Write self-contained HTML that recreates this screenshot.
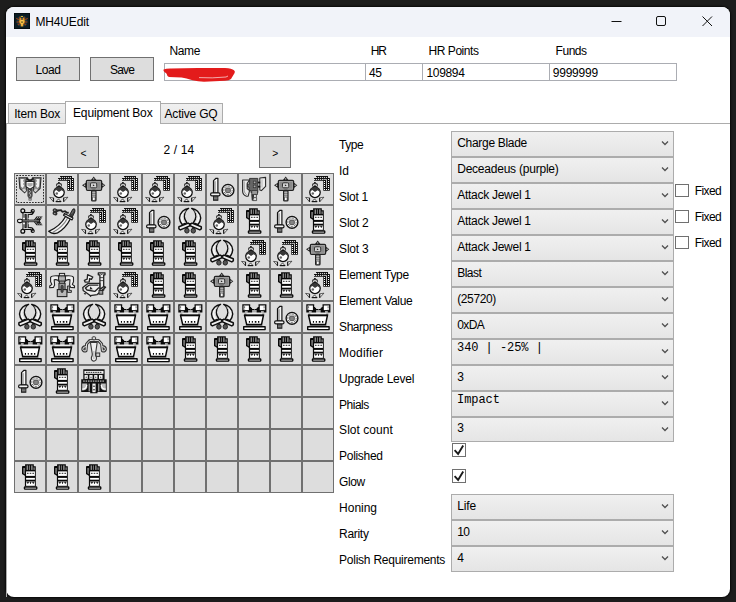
<!DOCTYPE html>
<html lang="en"><head><meta charset="utf-8"><title>MH4UEdit</title>
<style>
html,body{margin:0;padding:0;}
body{width:736px;height:602px;background:#1d1d1d;position:relative;overflow:hidden;font-family:"Liberation Sans",sans-serif;font-size:12px;}
.abs,.t,.btn,.inp,.cb,.chk,.cell{position:absolute;box-sizing:border-box;}
.t{white-space:pre;}
#win{position:absolute;left:6px;top:7px;width:724px;height:590px;background:#fff;border-radius:8px;overflow:hidden;box-shadow:0 0 2px 1px rgba(0,0,0,0.75);}
#tb{position:absolute;left:0;top:0;width:724px;height:30px;background:#f1f3f9;}
.btn{background:#ddd;border:1px solid #707070;}
.inp{background:#fff;border:1px solid #abadb3;}
.cb{border:1px solid #acacac;background:linear-gradient(#f0f0f0,#e5e5e5);}
.chk{border:1px solid #707070;background:#fff;}
.cell{background:#ddd;border:1px solid #707070;width:32px;height:32px;}
.cell svg{position:absolute;left:-1px;top:-1px;width:32px;height:32px;}
</style></head><body>
<div id="win"><div id="tb"></div></div>

<svg class="abs" style="left:14px;top:13px" width="16" height="16" viewBox="0 0 16 16">
<rect width="16" height="16" fill="#04090d"/>
<rect x="0.7" y="0.7" width="14.6" height="14.6" fill="#0b1c23"/>
<g style="filter:blur(0.45px)">
<circle cx="8" cy="8.2" r="5.6" fill="#16353d"/>
<path d="M2.2 5.2 L5.4 7 M2.6 9.2 L5.4 8.8 M3.8 12 L6 10.4 M13.8 5.2 L10.6 7 M13.4 9.2 L10.6 8.8 M12.2 12 L10 10.4 M5.2 3.8 L6.4 5.6 M10.8 3.8 L9.6 5.6" stroke="#8e3a16" stroke-width="1.2"/>
<path d="M5.6 5.2 L6.6 4.4 L8 5.4 L9.4 4.4 L10.4 5.2 L11 9 L9.4 11.2 L9.2 13.4 H6.8 L6.6 11.2 L5 9 Z" fill="#dc951f"/>
<path d="M6.4 7 L8 6.2 L9.6 7 L9.8 9.4 L8.6 11 L8.6 12.8 H7.4 L7.4 11 L6.2 9.4 Z" fill="#f7c654"/>
<rect x="6.8" y="3" width="2.2" height="0.9" fill="#f6c63a"/>
<rect x="7.3" y="5.2" width="1.4" height="1.7" fill="#2c3550"/>
<circle cx="8" cy="9.1" r="0.9" fill="#5c5a1c"/>
</g>
</svg>
<span class="t" style="left:35.40px;top:14.60px;font-size:12px;line-height:14px;color:#000;letter-spacing:-0.136px;">MH4UEdit</span>
<svg class="abs" style="left:600px;top:8px" width="124" height="28" viewBox="600 8 124 28" fill="none" stroke="#111" stroke-width="1">
<path d="M611.5 21.5 H621.5"/>
<rect x="656.5" y="16.5" width="9" height="9" rx="1.5"/>
<path d="M702.5 16.5 L712 26 M712 16.5 L702.5 26"/>
</svg>
<div class="btn" style="left:16px;top:57px;width:64px;height:24px"></div>
<div class="btn" style="left:90px;top:57px;width:64px;height:24px"></div>
<span class="t" style="left:35.50px;top:62.50px;font-size:12px;line-height:14px;color:#000;letter-spacing:-0.426px;">Load</span>
<span class="t" style="left:110.00px;top:62.50px;font-size:12px;line-height:14px;color:#000;letter-spacing:-0.840px;">Save</span>
<span class="t" style="left:169.50px;top:43.50px;font-size:12px;line-height:14px;color:#000;letter-spacing:-0.379px;">Name</span>
<span class="t" style="left:370.70px;top:43.50px;font-size:12px;line-height:14px;color:#000;letter-spacing:-1.172px;">HR</span>
<span class="t" style="left:428.50px;top:43.50px;font-size:12px;line-height:14px;color:#000;letter-spacing:-0.448px;">HR Points</span>
<span class="t" style="left:555.60px;top:43.50px;font-size:12px;line-height:14px;color:#000;letter-spacing:-0.472px;">Funds</span>
<div class="inp" style="left:164px;top:63px;width:202px;height:18px"></div>
<div class="inp" style="left:365px;top:63px;width:58px;height:18px"></div>
<div class="inp" style="left:422px;top:63px;width:128px;height:18px"></div>
<div class="inp" style="left:549px;top:63px;width:128px;height:18px"></div>
<span class="t" style="left:369.00px;top:65.50px;font-size:12px;line-height:14px;color:#000;letter-spacing:-0.430px;">45</span>
<span class="t" style="left:426.50px;top:65.50px;font-size:12px;line-height:14px;color:#000;letter-spacing:-0.341px;">109894</span>
<span class="t" style="left:552.70px;top:65.50px;font-size:12px;line-height:14px;color:#000;letter-spacing:-0.203px;">9999999</span>
<svg class="abs" style="left:160px;top:62px" width="80" height="24" viewBox="160 62 80 24">
<path d="M163.6 69.6 Q166 68.4 171 68.5 L198 68.1 L225 68 Q232 68.6 234 70.2 Q235.4 71.4 234.6 73 L231 79 Q229 80.6 225 80.8 L204 81.8 Q198 81.6 192.6 80.2 Q186 78 181.6 77.4 L169 76.9 Q167 76.4 166.6 73.8 L164 71.6 Q163.2 70.4 163.6 69.6 Z" fill="#e31b1b"/>
<path d="M199 77.6 Q212 78.4 226 77 L228 76" fill="none" stroke="#fbeaea" stroke-width="0.7"/>
</svg>
<div class="abs" style="left:6px;top:123px;width:724px;height:1px;background:#acacac"></div>
<div class="abs" style="left:6px;top:123px;width:1px;height:474px;background:#acacac"></div>
<div class="abs" style="left:8px;top:103px;width:58px;height:21px;border:1px solid #acacac;background:linear-gradient(#f0f0f0,#e5e5e5)"></div>
<div class="abs" style="left:160px;top:103px;width:63px;height:21px;border:1px solid #acacac;background:linear-gradient(#f0f0f0,#e5e5e5)"></div>
<div class="abs" style="left:65px;top:101px;width:96px;height:23px;border:1px solid #acacac;border-bottom:none;background:#fff"></div>
<span class="t" style="left:14.20px;top:107.00px;font-size:12px;line-height:14px;color:#000;letter-spacing:-0.170px;">Item Box</span>
<span class="t" style="left:73.00px;top:106.00px;font-size:12px;line-height:14px;color:#000;letter-spacing:-0.145px;">Equipment Box</span>
<span class="t" style="left:164.50px;top:107.00px;font-size:12px;line-height:14px;color:#000;letter-spacing:-0.188px;">Active GQ</span>
<div class="btn" style="left:67px;top:136px;width:32px;height:32px"></div>
<div class="btn" style="left:259px;top:136px;width:32px;height:32px"></div>
<span class="t" style="left:80.50px;top:146.50px;font-size:10.3px;line-height:13px;color:#000;">&lt;</span>
<span class="t" style="left:272.20px;top:146.50px;font-size:10.3px;line-height:13px;color:#000;">&gt;</span>
<span class="t" style="left:163.50px;top:142.70px;font-size:12px;line-height:14px;color:#000;letter-spacing:0.128px;">2 / 14</span>
<div class="cell" style="left:14px;top:173px"><svg viewBox="0 0 32 32"><path d="M5 4.8 H13.3 L12 7 L12.8 17.4 L10.6 19.8 L5.9 15.4 Z" fill="#8a8a8a" stroke="#2c2c2c" stroke-width="1.1"/><path d="M27 4.8 H18.7 L20 7 L19.2 17.4 L21.4 19.8 L26.1 15.4 Z" fill="#8a8a8a" stroke="#2c2c2c" stroke-width="1.1"/><path d="M6.6 6 H10 L9 8 L10.2 9.4 L9 11 L10.2 12.6 L8.8 15 L6.9 13.6 Z" fill="#f0f0f0"/><path d="M25.4 6 H22 L23 8 L21.8 9.4 L23 11 L21.8 12.6 L23.2 15 L25.1 13.6 Z" fill="#f0f0f0"/><path d="M10.4 15.6 L12.4 17.6 L10.6 19.2 L8 16.8 Z" fill="#d0d0d0"/><path d="M21.6 15.6 L19.6 17.6 L21.4 19.2 L24 16.8 Z" fill="#d0d0d0"/><path d="M12.6 4.4 L16 6.6 L19.4 4.4 L18.8 7.6 L16 8.4 L13.2 7.6 Z" fill="#1a1a1a"/><path d="M13.4 15.5 H18.6 V23 L17.6 25 V27.4 H14.6 V25 L13.4 23 Z" fill="#4a4a4a"/><path d="M15 17 L16.6 18.6 L15.2 20.4 L17 22 L15.6 24" fill="none" stroke="#bbb" stroke-width="0.9"/><rect x="14.8" y="25.6" width="2.6" height="1.4" fill="#999"/><path d="M12 8.4 H20 V13.6 L16 16.2 L12 13.6 Z" fill="#f4f4f4" stroke="#222" stroke-width="1.1" stroke-linejoin="round"/><path d="M13.4 9.9 H18.6 V12.4 L16 13.8 L13.4 12.4 Z" fill="#aaa"/></svg><svg viewBox="0 0 32 32"><rect x="2.5" y="2.5" width="27" height="27" fill="none" stroke="#111" stroke-width="0.9" stroke-dasharray="1.6 1.3"/></svg></div>
<div class="cell" style="left:46px;top:173px"><svg viewBox="0 0 32 32"><path d="M14 2.9 H26 V4.9 H27.9 V17.7 H21.3 V7.8 H12 V4.9 H14 Z" fill="#0c0c0c"/><rect x="13.85" y="3.95" width="1.1" height="0.9" fill="#fff"/><rect x="15.85" y="3.95" width="1.1" height="0.9" fill="#fff"/><rect x="17.85" y="3.95" width="1.1" height="0.9" fill="#fff"/><rect x="19.85" y="3.95" width="1.1" height="0.9" fill="#fff"/><rect x="21.85" y="3.95" width="1.1" height="0.9" fill="#fff"/><rect x="23.85" y="3.95" width="1.1" height="0.9" fill="#fff"/><rect x="11.95" y="5.95" width="1.1" height="0.9" fill="#fff"/><rect x="13.85" y="5.95" width="1.1" height="0.9" fill="#fff"/><rect x="15.85" y="5.95" width="1.1" height="0.9" fill="#fff"/><rect x="17.85" y="5.95" width="1.1" height="0.9" fill="#fff"/><rect x="19.85" y="5.95" width="1.1" height="0.9" fill="#fff"/><path d="M21.4 6.4 H24.5 V14.9" fill="none" stroke="#e8e8e8" stroke-width="0.8"/><rect x="22.00" y="8.00" width="1.0" height="1.0" fill="#fff"/><rect x="22.00" y="10.00" width="1.0" height="1.0" fill="#fff"/><rect x="22.00" y="12.00" width="1.0" height="1.0" fill="#fff"/><rect x="22.00" y="14.00" width="1.0" height="1.0" fill="#fff"/><rect x="22.00" y="16.00" width="1.0" height="1.0" fill="#fff"/><rect x="26.00" y="6.00" width="1.0" height="1.0" fill="#fff"/><rect x="26.00" y="8.00" width="1.0" height="1.0" fill="#fff"/><rect x="26.00" y="10.00" width="1.0" height="1.0" fill="#fff"/><rect x="26.00" y="12.00" width="1.0" height="1.0" fill="#fff"/><rect x="26.00" y="14.00" width="1.0" height="1.0" fill="#fff"/><rect x="26.00" y="16.00" width="1.0" height="1.0" fill="#fff"/><rect x="24.00" y="16.00" width="1.0" height="1.0" fill="#fff"/><rect x="12" y="9.1" width="1.8" height="1.2" fill="#111"/><rect x="10.3" y="10.3" width="5.4" height="3.6" rx="1.2" fill="#111"/><path d="M11.2 13.3 V11.8 Q11.2 11.2 11.8 11.2 H14.2 Q14.8 11.2 14.8 11.8 V13.3 H13.8 V12.3 H12.2 V13.3 Z" fill="#fff"/><circle cx="13" cy="19.3" r="5.25" fill="#fff" stroke="#0c0c0c" stroke-width="1.25"/><path d="M7.8 18.8 L10.3 16.9 L13 19.1 L15.6 17.2 L18.2 18.9 A5.25 5.25 0 0 0 7.8 18.8 Z" fill="#383838"/><circle cx="10.8" cy="20.4" r="1.25" fill="#666"/><path d="M3.6 24.4 L7.6 24.9 V28.8 Z" fill="#f0f0f0" stroke="#111" stroke-width="0.65" stroke-linejoin="round"/><path d="M7.35 24.9 V28.7" stroke="#111" stroke-width="1"/><path d="M9.9 28.7 L12.5 25.9 L15.1 28.7 Z" fill="#f0f0f0" stroke="#111" stroke-width="0.7" stroke-linejoin="round"/><path d="M9.9 28.55 H15.1" stroke="#111" stroke-width="1"/><path d="M17.5 24.9 L21.9 24.2 L17.7 28.8 Z" fill="#f0f0f0" stroke="#111" stroke-width="0.65" stroke-linejoin="round"/><path d="M17.75 24.8 V28.6" stroke="#111" stroke-width="1"/></svg></div>
<div class="cell" style="left:78px;top:173px"><svg viewBox="0 0 32 32"><path d="M12.8 7.2 L15.7 3.5 L18.6 7.2 Z" fill="#222"/><path d="M8.3 9.4 L4 12.3 L8.3 15.3 Z" fill="#222"/><path d="M23.7 9.4 L27.3 12.3 L23.7 15.3 Z" fill="#222"/><circle cx="15.7" cy="6" r="0.7" fill="#ccc"/><circle cx="6.6" cy="12.3" r="0.8" fill="#ccc"/><circle cx="25" cy="12.3" r="0.8" fill="#ccc"/><rect x="8.4" y="7.3" width="15.2" height="10" rx="1.2" fill="#8a8a8a" stroke="#222" stroke-width="1.3"/><rect x="9.6" y="8.5" width="12.8" height="7.6" fill="none" stroke="#a8a8a8" stroke-width="0.7"/><rect x="12.5" y="9.8" width="6.2" height="5" rx="1.2" fill="#d4d4d4" stroke="#333" stroke-width="1"/><path d="M14.9 11.4 L16.7 12.3 L14.9 13.2 Z" fill="#111"/><rect x="13.6" y="17.4" width="4.4" height="10.6" rx="1" fill="#777" stroke="#222" stroke-width="1.2"/><path d="M14.3 19.6 H17.3 M14.3 21.4 H17.3 M14.3 23.2 H17.3" stroke="#c8c8c8" stroke-width="0.8"/><rect x="15" y="24.6" width="1.6" height="2.4" rx="0.6" fill="#fff"/></svg></div>
<div class="cell" style="left:110px;top:173px"><svg viewBox="0 0 32 32"><path d="M14 2.9 H26 V4.9 H27.9 V17.7 H21.3 V7.8 H12 V4.9 H14 Z" fill="#0c0c0c"/><rect x="13.85" y="3.95" width="1.1" height="0.9" fill="#fff"/><rect x="15.85" y="3.95" width="1.1" height="0.9" fill="#fff"/><rect x="17.85" y="3.95" width="1.1" height="0.9" fill="#fff"/><rect x="19.85" y="3.95" width="1.1" height="0.9" fill="#fff"/><rect x="21.85" y="3.95" width="1.1" height="0.9" fill="#fff"/><rect x="23.85" y="3.95" width="1.1" height="0.9" fill="#fff"/><rect x="11.95" y="5.95" width="1.1" height="0.9" fill="#fff"/><rect x="13.85" y="5.95" width="1.1" height="0.9" fill="#fff"/><rect x="15.85" y="5.95" width="1.1" height="0.9" fill="#fff"/><rect x="17.85" y="5.95" width="1.1" height="0.9" fill="#fff"/><rect x="19.85" y="5.95" width="1.1" height="0.9" fill="#fff"/><path d="M21.4 6.4 H24.5 V14.9" fill="none" stroke="#e8e8e8" stroke-width="0.8"/><rect x="22.00" y="8.00" width="1.0" height="1.0" fill="#fff"/><rect x="22.00" y="10.00" width="1.0" height="1.0" fill="#fff"/><rect x="22.00" y="12.00" width="1.0" height="1.0" fill="#fff"/><rect x="22.00" y="14.00" width="1.0" height="1.0" fill="#fff"/><rect x="22.00" y="16.00" width="1.0" height="1.0" fill="#fff"/><rect x="26.00" y="6.00" width="1.0" height="1.0" fill="#fff"/><rect x="26.00" y="8.00" width="1.0" height="1.0" fill="#fff"/><rect x="26.00" y="10.00" width="1.0" height="1.0" fill="#fff"/><rect x="26.00" y="12.00" width="1.0" height="1.0" fill="#fff"/><rect x="26.00" y="14.00" width="1.0" height="1.0" fill="#fff"/><rect x="26.00" y="16.00" width="1.0" height="1.0" fill="#fff"/><rect x="24.00" y="16.00" width="1.0" height="1.0" fill="#fff"/><rect x="12" y="9.1" width="1.8" height="1.2" fill="#111"/><rect x="10.3" y="10.3" width="5.4" height="3.6" rx="1.2" fill="#111"/><path d="M11.2 13.3 V11.8 Q11.2 11.2 11.8 11.2 H14.2 Q14.8 11.2 14.8 11.8 V13.3 H13.8 V12.3 H12.2 V13.3 Z" fill="#fff"/><circle cx="13" cy="19.3" r="5.25" fill="#fff" stroke="#0c0c0c" stroke-width="1.25"/><path d="M7.8 18.8 L10.3 16.9 L13 19.1 L15.6 17.2 L18.2 18.9 A5.25 5.25 0 0 0 7.8 18.8 Z" fill="#383838"/><circle cx="10.8" cy="20.4" r="1.25" fill="#666"/><path d="M3.6 24.4 L7.6 24.9 V28.8 Z" fill="#f0f0f0" stroke="#111" stroke-width="0.65" stroke-linejoin="round"/><path d="M7.35 24.9 V28.7" stroke="#111" stroke-width="1"/><path d="M9.9 28.7 L12.5 25.9 L15.1 28.7 Z" fill="#f0f0f0" stroke="#111" stroke-width="0.7" stroke-linejoin="round"/><path d="M9.9 28.55 H15.1" stroke="#111" stroke-width="1"/><path d="M17.5 24.9 L21.9 24.2 L17.7 28.8 Z" fill="#f0f0f0" stroke="#111" stroke-width="0.65" stroke-linejoin="round"/><path d="M17.75 24.8 V28.6" stroke="#111" stroke-width="1"/></svg></div>
<div class="cell" style="left:142px;top:173px"><svg viewBox="0 0 32 32"><path d="M14 2.9 H26 V4.9 H27.9 V17.7 H21.3 V7.8 H12 V4.9 H14 Z" fill="#0c0c0c"/><rect x="13.85" y="3.95" width="1.1" height="0.9" fill="#fff"/><rect x="15.85" y="3.95" width="1.1" height="0.9" fill="#fff"/><rect x="17.85" y="3.95" width="1.1" height="0.9" fill="#fff"/><rect x="19.85" y="3.95" width="1.1" height="0.9" fill="#fff"/><rect x="21.85" y="3.95" width="1.1" height="0.9" fill="#fff"/><rect x="23.85" y="3.95" width="1.1" height="0.9" fill="#fff"/><rect x="11.95" y="5.95" width="1.1" height="0.9" fill="#fff"/><rect x="13.85" y="5.95" width="1.1" height="0.9" fill="#fff"/><rect x="15.85" y="5.95" width="1.1" height="0.9" fill="#fff"/><rect x="17.85" y="5.95" width="1.1" height="0.9" fill="#fff"/><rect x="19.85" y="5.95" width="1.1" height="0.9" fill="#fff"/><path d="M21.4 6.4 H24.5 V14.9" fill="none" stroke="#e8e8e8" stroke-width="0.8"/><rect x="22.00" y="8.00" width="1.0" height="1.0" fill="#fff"/><rect x="22.00" y="10.00" width="1.0" height="1.0" fill="#fff"/><rect x="22.00" y="12.00" width="1.0" height="1.0" fill="#fff"/><rect x="22.00" y="14.00" width="1.0" height="1.0" fill="#fff"/><rect x="22.00" y="16.00" width="1.0" height="1.0" fill="#fff"/><rect x="26.00" y="6.00" width="1.0" height="1.0" fill="#fff"/><rect x="26.00" y="8.00" width="1.0" height="1.0" fill="#fff"/><rect x="26.00" y="10.00" width="1.0" height="1.0" fill="#fff"/><rect x="26.00" y="12.00" width="1.0" height="1.0" fill="#fff"/><rect x="26.00" y="14.00" width="1.0" height="1.0" fill="#fff"/><rect x="26.00" y="16.00" width="1.0" height="1.0" fill="#fff"/><rect x="24.00" y="16.00" width="1.0" height="1.0" fill="#fff"/><rect x="12" y="9.1" width="1.8" height="1.2" fill="#111"/><rect x="10.3" y="10.3" width="5.4" height="3.6" rx="1.2" fill="#111"/><path d="M11.2 13.3 V11.8 Q11.2 11.2 11.8 11.2 H14.2 Q14.8 11.2 14.8 11.8 V13.3 H13.8 V12.3 H12.2 V13.3 Z" fill="#fff"/><circle cx="13" cy="19.3" r="5.25" fill="#fff" stroke="#0c0c0c" stroke-width="1.25"/><path d="M7.8 18.8 L10.3 16.9 L13 19.1 L15.6 17.2 L18.2 18.9 A5.25 5.25 0 0 0 7.8 18.8 Z" fill="#383838"/><circle cx="10.8" cy="20.4" r="1.25" fill="#666"/><path d="M3.6 24.4 L7.6 24.9 V28.8 Z" fill="#f0f0f0" stroke="#111" stroke-width="0.65" stroke-linejoin="round"/><path d="M7.35 24.9 V28.7" stroke="#111" stroke-width="1"/><path d="M9.9 28.7 L12.5 25.9 L15.1 28.7 Z" fill="#f0f0f0" stroke="#111" stroke-width="0.7" stroke-linejoin="round"/><path d="M9.9 28.55 H15.1" stroke="#111" stroke-width="1"/><path d="M17.5 24.9 L21.9 24.2 L17.7 28.8 Z" fill="#f0f0f0" stroke="#111" stroke-width="0.65" stroke-linejoin="round"/><path d="M17.75 24.8 V28.6" stroke="#111" stroke-width="1"/></svg></div>
<div class="cell" style="left:174px;top:173px"><svg viewBox="0 0 32 32"><path d="M14 2.9 H26 V4.9 H27.9 V17.7 H21.3 V7.8 H12 V4.9 H14 Z" fill="#0c0c0c"/><rect x="13.85" y="3.95" width="1.1" height="0.9" fill="#fff"/><rect x="15.85" y="3.95" width="1.1" height="0.9" fill="#fff"/><rect x="17.85" y="3.95" width="1.1" height="0.9" fill="#fff"/><rect x="19.85" y="3.95" width="1.1" height="0.9" fill="#fff"/><rect x="21.85" y="3.95" width="1.1" height="0.9" fill="#fff"/><rect x="23.85" y="3.95" width="1.1" height="0.9" fill="#fff"/><rect x="11.95" y="5.95" width="1.1" height="0.9" fill="#fff"/><rect x="13.85" y="5.95" width="1.1" height="0.9" fill="#fff"/><rect x="15.85" y="5.95" width="1.1" height="0.9" fill="#fff"/><rect x="17.85" y="5.95" width="1.1" height="0.9" fill="#fff"/><rect x="19.85" y="5.95" width="1.1" height="0.9" fill="#fff"/><path d="M21.4 6.4 H24.5 V14.9" fill="none" stroke="#e8e8e8" stroke-width="0.8"/><rect x="22.00" y="8.00" width="1.0" height="1.0" fill="#fff"/><rect x="22.00" y="10.00" width="1.0" height="1.0" fill="#fff"/><rect x="22.00" y="12.00" width="1.0" height="1.0" fill="#fff"/><rect x="22.00" y="14.00" width="1.0" height="1.0" fill="#fff"/><rect x="22.00" y="16.00" width="1.0" height="1.0" fill="#fff"/><rect x="26.00" y="6.00" width="1.0" height="1.0" fill="#fff"/><rect x="26.00" y="8.00" width="1.0" height="1.0" fill="#fff"/><rect x="26.00" y="10.00" width="1.0" height="1.0" fill="#fff"/><rect x="26.00" y="12.00" width="1.0" height="1.0" fill="#fff"/><rect x="26.00" y="14.00" width="1.0" height="1.0" fill="#fff"/><rect x="26.00" y="16.00" width="1.0" height="1.0" fill="#fff"/><rect x="24.00" y="16.00" width="1.0" height="1.0" fill="#fff"/><rect x="12" y="9.1" width="1.8" height="1.2" fill="#111"/><rect x="10.3" y="10.3" width="5.4" height="3.6" rx="1.2" fill="#111"/><path d="M11.2 13.3 V11.8 Q11.2 11.2 11.8 11.2 H14.2 Q14.8 11.2 14.8 11.8 V13.3 H13.8 V12.3 H12.2 V13.3 Z" fill="#fff"/><circle cx="13" cy="19.3" r="5.25" fill="#fff" stroke="#0c0c0c" stroke-width="1.25"/><path d="M7.8 18.8 L10.3 16.9 L13 19.1 L15.6 17.2 L18.2 18.9 A5.25 5.25 0 0 0 7.8 18.8 Z" fill="#383838"/><circle cx="10.8" cy="20.4" r="1.25" fill="#666"/><path d="M3.6 24.4 L7.6 24.9 V28.8 Z" fill="#f0f0f0" stroke="#111" stroke-width="0.65" stroke-linejoin="round"/><path d="M7.35 24.9 V28.7" stroke="#111" stroke-width="1"/><path d="M9.9 28.7 L12.5 25.9 L15.1 28.7 Z" fill="#f0f0f0" stroke="#111" stroke-width="0.7" stroke-linejoin="round"/><path d="M9.9 28.55 H15.1" stroke="#111" stroke-width="1"/><path d="M17.5 24.9 L21.9 24.2 L17.7 28.8 Z" fill="#f0f0f0" stroke="#111" stroke-width="0.65" stroke-linejoin="round"/><path d="M17.75 24.8 V28.6" stroke="#111" stroke-width="1"/></svg></div>
<div class="cell" style="left:206px;top:173px"><svg viewBox="0 0 32 32"><path d="M7.5 7.6 L10 5.3 H11.9 V20 H7.5 Z" fill="#f6f6f6" stroke="#141414" stroke-width="1.2" stroke-linejoin="round"/><path d="M9 8.2 V19.6" stroke="#3a3a3a" stroke-width="0.7"/><rect x="7.5" y="22.6" width="4.4" height="4.7" fill="#505050" stroke="#1c1c1c" stroke-width="0.9"/><path d="M8 24 H11.4 M8 25.6 H11.4" stroke="#9a9a9a" stroke-width="0.6"/><rect x="4.6" y="19.9" width="9.4" height="2.9" rx="1.4" fill="#f0f0f0" stroke="#141414" stroke-width="1.2"/><circle cx="22" cy="17.3" r="5.9" fill="#f4f4f4" stroke="#141414" stroke-width="1.4"/><circle cx="22" cy="17.3" r="4.2" fill="none" stroke="#3a3a3a" stroke-width="0.7" stroke-dasharray="2.3 1.0" stroke-dashoffset="1.1"/><rect x="19.7" y="15.1" width="4.6" height="4.5" rx="0.9" fill="#858585" stroke="#4a4a4a" stroke-width="0.9"/></svg></div>
<div class="cell" style="left:238px;top:173px"><svg viewBox="0 0 32 32"><path d="M4.6 7 H11.6 L9.2 10.4 V15.8 L11.6 17.4 L10.2 23.2 H8.4 Q4.6 21.8 4.6 18 Z" fill="#e9e9e9" stroke="#2a2a2a" stroke-width="1.1" stroke-linejoin="round"/><path d="M6.2 8.4 V18 Q6.6 20.6 8.8 21.8" fill="none" stroke="#888" stroke-width="0.8"/><path d="M21.8 5 L27.6 4.4 V13.4 L23.4 17.6 L21.8 17 Z" fill="#ececec" stroke="#2a2a2a" stroke-width="1.1" stroke-linejoin="round"/><path d="M24 6.4 V14.6" stroke="#aaa" stroke-width="0.8"/><rect x="19.6" y="8.6" width="2.6" height="1.8" fill="#111"/><rect x="19.6" y="12.8" width="2.6" height="1.8" fill="#111"/><path d="M11.6 5.4 H19.8 V19.6 H13 V17.6 H11 V14 H9.4 V11.2 H11.6 Z" fill="#666" stroke="#2a2a2a" stroke-width="0.9" stroke-linejoin="round"/><rect x="15.3" y="8.1" width="2.6" height="2.6" fill="#aaa" stroke="#333" stroke-width="0.7"/><rect x="15.3" y="12.1" width="2.6" height="2.6" fill="#aaa" stroke="#333" stroke-width="0.7"/><rect x="13.8" y="17.6" width="5.6" height="3.8" fill="#999" stroke="#333" stroke-width="0.8"/><path d="M13.2 21.4 H16 V25 L15.2 27.4 H13.8 Z" fill="#333"/><path d="M15.6 24.6 H18.6 V27.6 H14.8 Z" fill="#ddd" stroke="#333" stroke-width="0.8"/><path d="M16.4 21.4 H18.4 V24.4" stroke="#444" stroke-width="0.9" fill="none"/></svg></div>
<div class="cell" style="left:270px;top:173px"><svg viewBox="0 0 32 32"><path d="M12.8 7.2 L15.7 3.5 L18.6 7.2 Z" fill="#222"/><path d="M8.3 9.4 L4 12.3 L8.3 15.3 Z" fill="#222"/><path d="M23.7 9.4 L27.3 12.3 L23.7 15.3 Z" fill="#222"/><circle cx="15.7" cy="6" r="0.7" fill="#ccc"/><circle cx="6.6" cy="12.3" r="0.8" fill="#ccc"/><circle cx="25" cy="12.3" r="0.8" fill="#ccc"/><rect x="8.4" y="7.3" width="15.2" height="10" rx="1.2" fill="#8a8a8a" stroke="#222" stroke-width="1.3"/><rect x="9.6" y="8.5" width="12.8" height="7.6" fill="none" stroke="#a8a8a8" stroke-width="0.7"/><rect x="12.5" y="9.8" width="6.2" height="5" rx="1.2" fill="#d4d4d4" stroke="#333" stroke-width="1"/><path d="M14.9 11.4 L16.7 12.3 L14.9 13.2 Z" fill="#111"/><rect x="13.6" y="17.4" width="4.4" height="10.6" rx="1" fill="#777" stroke="#222" stroke-width="1.2"/><path d="M14.3 19.6 H17.3 M14.3 21.4 H17.3 M14.3 23.2 H17.3" stroke="#c8c8c8" stroke-width="0.8"/><rect x="15" y="24.6" width="1.6" height="2.4" rx="0.6" fill="#fff"/></svg></div>
<div class="cell" style="left:302px;top:173px"><svg viewBox="0 0 32 32"><path d="M14 2.9 H26 V4.9 H27.9 V17.7 H21.3 V7.8 H12 V4.9 H14 Z" fill="#0c0c0c"/><rect x="13.85" y="3.95" width="1.1" height="0.9" fill="#fff"/><rect x="15.85" y="3.95" width="1.1" height="0.9" fill="#fff"/><rect x="17.85" y="3.95" width="1.1" height="0.9" fill="#fff"/><rect x="19.85" y="3.95" width="1.1" height="0.9" fill="#fff"/><rect x="21.85" y="3.95" width="1.1" height="0.9" fill="#fff"/><rect x="23.85" y="3.95" width="1.1" height="0.9" fill="#fff"/><rect x="11.95" y="5.95" width="1.1" height="0.9" fill="#fff"/><rect x="13.85" y="5.95" width="1.1" height="0.9" fill="#fff"/><rect x="15.85" y="5.95" width="1.1" height="0.9" fill="#fff"/><rect x="17.85" y="5.95" width="1.1" height="0.9" fill="#fff"/><rect x="19.85" y="5.95" width="1.1" height="0.9" fill="#fff"/><path d="M21.4 6.4 H24.5 V14.9" fill="none" stroke="#e8e8e8" stroke-width="0.8"/><rect x="22.00" y="8.00" width="1.0" height="1.0" fill="#fff"/><rect x="22.00" y="10.00" width="1.0" height="1.0" fill="#fff"/><rect x="22.00" y="12.00" width="1.0" height="1.0" fill="#fff"/><rect x="22.00" y="14.00" width="1.0" height="1.0" fill="#fff"/><rect x="22.00" y="16.00" width="1.0" height="1.0" fill="#fff"/><rect x="26.00" y="6.00" width="1.0" height="1.0" fill="#fff"/><rect x="26.00" y="8.00" width="1.0" height="1.0" fill="#fff"/><rect x="26.00" y="10.00" width="1.0" height="1.0" fill="#fff"/><rect x="26.00" y="12.00" width="1.0" height="1.0" fill="#fff"/><rect x="26.00" y="14.00" width="1.0" height="1.0" fill="#fff"/><rect x="26.00" y="16.00" width="1.0" height="1.0" fill="#fff"/><rect x="24.00" y="16.00" width="1.0" height="1.0" fill="#fff"/><rect x="12" y="9.1" width="1.8" height="1.2" fill="#111"/><rect x="10.3" y="10.3" width="5.4" height="3.6" rx="1.2" fill="#111"/><path d="M11.2 13.3 V11.8 Q11.2 11.2 11.8 11.2 H14.2 Q14.8 11.2 14.8 11.8 V13.3 H13.8 V12.3 H12.2 V13.3 Z" fill="#fff"/><circle cx="13" cy="19.3" r="5.25" fill="#fff" stroke="#0c0c0c" stroke-width="1.25"/><path d="M7.8 18.8 L10.3 16.9 L13 19.1 L15.6 17.2 L18.2 18.9 A5.25 5.25 0 0 0 7.8 18.8 Z" fill="#383838"/><circle cx="10.8" cy="20.4" r="1.25" fill="#666"/><path d="M3.6 24.4 L7.6 24.9 V28.8 Z" fill="#f0f0f0" stroke="#111" stroke-width="0.65" stroke-linejoin="round"/><path d="M7.35 24.9 V28.7" stroke="#111" stroke-width="1"/><path d="M9.9 28.7 L12.5 25.9 L15.1 28.7 Z" fill="#f0f0f0" stroke="#111" stroke-width="0.7" stroke-linejoin="round"/><path d="M9.9 28.55 H15.1" stroke="#111" stroke-width="1"/><path d="M17.5 24.9 L21.9 24.2 L17.7 28.8 Z" fill="#f0f0f0" stroke="#111" stroke-width="0.65" stroke-linejoin="round"/><path d="M17.75 24.8 V28.6" stroke="#111" stroke-width="1"/></svg></div>
<div class="cell" style="left:14px;top:205px"><svg viewBox="0 0 32 32"><g fill="none" stroke-linecap="round" stroke-linejoin="round"><path d="M9.2 6.4 L10 8.4 V23.6 L9.2 25.6 M10 8.6 H16.4 Q18.2 8.6 18.6 6.6 M10 23.4 H16.4 Q18.2 23.4 18.6 25.4 M13.2 8.6 V23.4" stroke="#0c0c0c" stroke-width="3"/><path d="M9.2 6.4 L10 8.4 V23.6 L9.2 25.6 M10 8.6 H16.4 Q18.2 8.6 18.6 6.6 M10 23.4 H16.4 Q18.2 23.4 18.6 25.4 M13.2 8.6 V23.4" stroke="#d8d8d8" stroke-width="1"/></g><circle cx="8.8" cy="5.7" r="1.9" fill="#e8e8e8" stroke="#0c0c0c" stroke-width="1.3"/><circle cx="8.8" cy="26.3" r="1.9" fill="#e8e8e8" stroke="#0c0c0c" stroke-width="1.3"/><circle cx="18.7" cy="6" r="2.1" fill="#0c0c0c"/><circle cx="18.7" cy="26" r="2.1" fill="#0c0c0c"/><circle cx="19" cy="5.8" r="0.8" fill="#ccc"/><circle cx="19" cy="26.2" r="0.8" fill="#ccc"/><rect x="9" y="12.8" width="2" height="1.6" fill="#eee"/><rect x="9" y="17.6" width="2" height="1.6" fill="#eee"/><rect x="14.4" y="12.8" width="2" height="1.6" fill="#eee"/><rect x="14.4" y="17.6" width="2" height="1.6" fill="#eee"/><path d="M19.2 15.9 L22.4 11.5 H28.6 L25.8 15.9 L28.6 20.3 H22.4 Z" fill="#1c1c1c"/><path d="M22.8 13.4 L23.8 12.2 M24.8 13.4 L25.8 12.2 M26.6 13.4 L27.4 12.4 M22.8 18.4 L23.8 19.6 M24.8 18.4 L25.8 19.6 M26.6 18.4 L27.4 19.4 M21.6 14.8 L22.4 13.8 M21.6 17 L22.4 18" stroke="#e0e0e0" stroke-width="0.9"/><rect x="7.6" y="15" width="17.8" height="1.8" fill="#999" stroke="#0c0c0c" stroke-width="0.7"/><rect x="3.5" y="14.2" width="4.8" height="3.4" rx="1.6" fill="#eaeaea" stroke="#0c0c0c" stroke-width="1.1"/></svg></div>
<div class="cell" style="left:46px;top:205px"><svg viewBox="0 0 32 32"><path d="M7 4 Q8.8 2.6 10.6 4 L12.2 4.8 L12.6 6.6 L11 7.2 Q12.2 9 10.6 10.2 Q8.6 10.8 7 9.6 Q5.8 8 7.2 6.8 Q6 5.2 7 4 Z" fill="#2e2e2e"/><circle cx="8.8" cy="5.2" r="0.7" fill="#b0b0b0"/><circle cx="8.8" cy="8.5" r="0.7" fill="#b0b0b0"/><path d="M12 5.4 L15 5.2 L16.4 6.8 L19 6.2 L21 7.8 L22.8 7.6" fill="none" stroke="#222" stroke-width="1.8"/><path d="M23.4 10.2 L26.8 4.2 Q28.2 3 29 4.6 L28.8 7 L26.2 12.2 Z" fill="#404040" stroke="#1c1c1c" stroke-width="0.9"/><path d="M25.6 8.8 L27.6 5.2" stroke="#8a8a8a" stroke-width="0.7"/><path d="M19.7 11.2 Q14.4 21.2 2.7 26.3 Q6.4 29.8 11.6 27.8 Q19.4 23.8 24.4 13.8 Z" fill="#f4f4f4" stroke="#141414" stroke-width="1.3" stroke-linejoin="round"/><path d="M21.8 12.8 Q16.6 22.6 6.6 27.4" fill="none" stroke="#808080" stroke-width="1.1"/><path d="M18.4 8.4 L27 13 L26 14.9 L17.5 10.3 Z" fill="#f0f0f0" stroke="#141414" stroke-width="1.1" stroke-linejoin="round"/></svg></div>
<div class="cell" style="left:78px;top:205px"><svg viewBox="0 0 32 32"><path d="M14 2.9 H26 V4.9 H27.9 V17.7 H21.3 V7.8 H12 V4.9 H14 Z" fill="#0c0c0c"/><rect x="13.85" y="3.95" width="1.1" height="0.9" fill="#fff"/><rect x="15.85" y="3.95" width="1.1" height="0.9" fill="#fff"/><rect x="17.85" y="3.95" width="1.1" height="0.9" fill="#fff"/><rect x="19.85" y="3.95" width="1.1" height="0.9" fill="#fff"/><rect x="21.85" y="3.95" width="1.1" height="0.9" fill="#fff"/><rect x="23.85" y="3.95" width="1.1" height="0.9" fill="#fff"/><rect x="11.95" y="5.95" width="1.1" height="0.9" fill="#fff"/><rect x="13.85" y="5.95" width="1.1" height="0.9" fill="#fff"/><rect x="15.85" y="5.95" width="1.1" height="0.9" fill="#fff"/><rect x="17.85" y="5.95" width="1.1" height="0.9" fill="#fff"/><rect x="19.85" y="5.95" width="1.1" height="0.9" fill="#fff"/><path d="M21.4 6.4 H24.5 V14.9" fill="none" stroke="#e8e8e8" stroke-width="0.8"/><rect x="22.00" y="8.00" width="1.0" height="1.0" fill="#fff"/><rect x="22.00" y="10.00" width="1.0" height="1.0" fill="#fff"/><rect x="22.00" y="12.00" width="1.0" height="1.0" fill="#fff"/><rect x="22.00" y="14.00" width="1.0" height="1.0" fill="#fff"/><rect x="22.00" y="16.00" width="1.0" height="1.0" fill="#fff"/><rect x="26.00" y="6.00" width="1.0" height="1.0" fill="#fff"/><rect x="26.00" y="8.00" width="1.0" height="1.0" fill="#fff"/><rect x="26.00" y="10.00" width="1.0" height="1.0" fill="#fff"/><rect x="26.00" y="12.00" width="1.0" height="1.0" fill="#fff"/><rect x="26.00" y="14.00" width="1.0" height="1.0" fill="#fff"/><rect x="26.00" y="16.00" width="1.0" height="1.0" fill="#fff"/><rect x="24.00" y="16.00" width="1.0" height="1.0" fill="#fff"/><rect x="12" y="9.1" width="1.8" height="1.2" fill="#111"/><rect x="10.3" y="10.3" width="5.4" height="3.6" rx="1.2" fill="#111"/><path d="M11.2 13.3 V11.8 Q11.2 11.2 11.8 11.2 H14.2 Q14.8 11.2 14.8 11.8 V13.3 H13.8 V12.3 H12.2 V13.3 Z" fill="#fff"/><circle cx="13" cy="19.3" r="5.25" fill="#fff" stroke="#0c0c0c" stroke-width="1.25"/><path d="M7.8 18.8 L10.3 16.9 L13 19.1 L15.6 17.2 L18.2 18.9 A5.25 5.25 0 0 0 7.8 18.8 Z" fill="#383838"/><circle cx="10.8" cy="20.4" r="1.25" fill="#666"/><path d="M3.6 24.4 L7.6 24.9 V28.8 Z" fill="#f0f0f0" stroke="#111" stroke-width="0.65" stroke-linejoin="round"/><path d="M7.35 24.9 V28.7" stroke="#111" stroke-width="1"/><path d="M9.9 28.7 L12.5 25.9 L15.1 28.7 Z" fill="#f0f0f0" stroke="#111" stroke-width="0.7" stroke-linejoin="round"/><path d="M9.9 28.55 H15.1" stroke="#111" stroke-width="1"/><path d="M17.5 24.9 L21.9 24.2 L17.7 28.8 Z" fill="#f0f0f0" stroke="#111" stroke-width="0.65" stroke-linejoin="round"/><path d="M17.75 24.8 V28.6" stroke="#111" stroke-width="1"/></svg></div>
<div class="cell" style="left:110px;top:205px"><svg viewBox="0 0 32 32"><path d="M14 2.9 H26 V4.9 H27.9 V17.7 H21.3 V7.8 H12 V4.9 H14 Z" fill="#0c0c0c"/><rect x="13.85" y="3.95" width="1.1" height="0.9" fill="#fff"/><rect x="15.85" y="3.95" width="1.1" height="0.9" fill="#fff"/><rect x="17.85" y="3.95" width="1.1" height="0.9" fill="#fff"/><rect x="19.85" y="3.95" width="1.1" height="0.9" fill="#fff"/><rect x="21.85" y="3.95" width="1.1" height="0.9" fill="#fff"/><rect x="23.85" y="3.95" width="1.1" height="0.9" fill="#fff"/><rect x="11.95" y="5.95" width="1.1" height="0.9" fill="#fff"/><rect x="13.85" y="5.95" width="1.1" height="0.9" fill="#fff"/><rect x="15.85" y="5.95" width="1.1" height="0.9" fill="#fff"/><rect x="17.85" y="5.95" width="1.1" height="0.9" fill="#fff"/><rect x="19.85" y="5.95" width="1.1" height="0.9" fill="#fff"/><path d="M21.4 6.4 H24.5 V14.9" fill="none" stroke="#e8e8e8" stroke-width="0.8"/><rect x="22.00" y="8.00" width="1.0" height="1.0" fill="#fff"/><rect x="22.00" y="10.00" width="1.0" height="1.0" fill="#fff"/><rect x="22.00" y="12.00" width="1.0" height="1.0" fill="#fff"/><rect x="22.00" y="14.00" width="1.0" height="1.0" fill="#fff"/><rect x="22.00" y="16.00" width="1.0" height="1.0" fill="#fff"/><rect x="26.00" y="6.00" width="1.0" height="1.0" fill="#fff"/><rect x="26.00" y="8.00" width="1.0" height="1.0" fill="#fff"/><rect x="26.00" y="10.00" width="1.0" height="1.0" fill="#fff"/><rect x="26.00" y="12.00" width="1.0" height="1.0" fill="#fff"/><rect x="26.00" y="14.00" width="1.0" height="1.0" fill="#fff"/><rect x="26.00" y="16.00" width="1.0" height="1.0" fill="#fff"/><rect x="24.00" y="16.00" width="1.0" height="1.0" fill="#fff"/><rect x="12" y="9.1" width="1.8" height="1.2" fill="#111"/><rect x="10.3" y="10.3" width="5.4" height="3.6" rx="1.2" fill="#111"/><path d="M11.2 13.3 V11.8 Q11.2 11.2 11.8 11.2 H14.2 Q14.8 11.2 14.8 11.8 V13.3 H13.8 V12.3 H12.2 V13.3 Z" fill="#fff"/><circle cx="13" cy="19.3" r="5.25" fill="#fff" stroke="#0c0c0c" stroke-width="1.25"/><path d="M7.8 18.8 L10.3 16.9 L13 19.1 L15.6 17.2 L18.2 18.9 A5.25 5.25 0 0 0 7.8 18.8 Z" fill="#383838"/><circle cx="10.8" cy="20.4" r="1.25" fill="#666"/><path d="M3.6 24.4 L7.6 24.9 V28.8 Z" fill="#f0f0f0" stroke="#111" stroke-width="0.65" stroke-linejoin="round"/><path d="M7.35 24.9 V28.7" stroke="#111" stroke-width="1"/><path d="M9.9 28.7 L12.5 25.9 L15.1 28.7 Z" fill="#f0f0f0" stroke="#111" stroke-width="0.7" stroke-linejoin="round"/><path d="M9.9 28.55 H15.1" stroke="#111" stroke-width="1"/><path d="M17.5 24.9 L21.9 24.2 L17.7 28.8 Z" fill="#f0f0f0" stroke="#111" stroke-width="0.65" stroke-linejoin="round"/><path d="M17.75 24.8 V28.6" stroke="#111" stroke-width="1"/></svg></div>
<div class="cell" style="left:142px;top:205px"><svg viewBox="0 0 32 32"><path d="M7.5 7.6 L10 5.3 H11.9 V20 H7.5 Z" fill="#f6f6f6" stroke="#141414" stroke-width="1.2" stroke-linejoin="round"/><path d="M9 8.2 V19.6" stroke="#3a3a3a" stroke-width="0.7"/><rect x="7.5" y="22.6" width="4.4" height="4.7" fill="#505050" stroke="#1c1c1c" stroke-width="0.9"/><path d="M8 24 H11.4 M8 25.6 H11.4" stroke="#9a9a9a" stroke-width="0.6"/><rect x="4.6" y="19.9" width="9.4" height="2.9" rx="1.4" fill="#f0f0f0" stroke="#141414" stroke-width="1.2"/><circle cx="22" cy="17.3" r="5.9" fill="#f4f4f4" stroke="#141414" stroke-width="1.4"/><circle cx="22" cy="17.3" r="4.2" fill="none" stroke="#3a3a3a" stroke-width="0.7" stroke-dasharray="2.3 1.0" stroke-dashoffset="1.1"/><rect x="19.7" y="15.1" width="4.6" height="4.5" rx="0.9" fill="#858585" stroke="#4a4a4a" stroke-width="0.9"/></svg></div>
<div class="cell" style="left:174px;top:205px"><svg viewBox="0 0 32 32"><path d="M14.5 3.4 Q11 4 8.6 6.2 Q5.6 9.2 5.5 13 Q5.8 16.6 8.2 19.6 L12.8 17.6 Q10.4 14.4 10.2 11.4 Q10.2 8 12.2 5.4 Q13.2 4.2 14.5 3.4 Z" fill="#f4f4f4" stroke="#0e0e0e" stroke-width="1.45" stroke-linejoin="round"/><path d="M11.6 5.6 Q9 8.6 9 12 Q9.4 15.4 11.4 18" fill="none" stroke="#cfcfcf" stroke-width="0.9"/><g transform="translate(32.2 0) scale(-1 1)"><path d="M14.5 3.4 Q11 4 8.6 6.2 Q5.6 9.2 5.5 13 Q5.8 16.6 8.2 19.6 L12.8 17.6 Q10.4 14.4 10.2 11.4 Q10.2 8 12.2 5.4 Q13.2 4.2 14.5 3.4 Z" fill="#f4f4f4" stroke="#0e0e0e" stroke-width="1.45" stroke-linejoin="round"/><path d="M11.6 5.6 Q9 8.6 9 12 Q9.4 15.4 11.4 18" fill="none" stroke="#cfcfcf" stroke-width="0.9"/></g><path d="M11.6 22 L14 23.4 M12 22.2 L13.6 24" stroke="#1a1a1a" stroke-width="1.6"/><ellipse cx="12.9" cy="25.7" rx="2.2" ry="2.4" fill="#555" stroke="#222" stroke-width="1"/><g transform="translate(32.2 0) scale(-1 1)"><path d="M11.6 22 L14 23.4 M12 22.2 L13.6 24" stroke="#1a1a1a" stroke-width="1.6"/><ellipse cx="12.9" cy="25.7" rx="2.2" ry="2.4" fill="#555" stroke="#222" stroke-width="1"/></g><path d="M4.9 21.8 L14.4 18.1 Q15.9 18.6 15.7 20.8 L6.4 24.9 Q4.4 24.2 4.9 21.8 Z" fill="#efefef" stroke="#0e0e0e" stroke-width="1.45" stroke-linejoin="round"/><g transform="translate(32.2 0) scale(-1 1)"><path d="M4.9 21.8 L14.4 18.1 Q15.9 18.6 15.7 20.8 L6.4 24.9 Q4.4 24.2 4.9 21.8 Z" fill="#efefef" stroke="#0e0e0e" stroke-width="1.45" stroke-linejoin="round"/></g><path d="M16.1 18 V21.2" stroke="#151515" stroke-width="1.8"/></svg></div>
<div class="cell" style="left:206px;top:205px"><svg viewBox="0 0 32 32"><path d="M14 2.9 H26 V4.9 H27.9 V17.7 H21.3 V7.8 H12 V4.9 H14 Z" fill="#0c0c0c"/><rect x="13.85" y="3.95" width="1.1" height="0.9" fill="#fff"/><rect x="15.85" y="3.95" width="1.1" height="0.9" fill="#fff"/><rect x="17.85" y="3.95" width="1.1" height="0.9" fill="#fff"/><rect x="19.85" y="3.95" width="1.1" height="0.9" fill="#fff"/><rect x="21.85" y="3.95" width="1.1" height="0.9" fill="#fff"/><rect x="23.85" y="3.95" width="1.1" height="0.9" fill="#fff"/><rect x="11.95" y="5.95" width="1.1" height="0.9" fill="#fff"/><rect x="13.85" y="5.95" width="1.1" height="0.9" fill="#fff"/><rect x="15.85" y="5.95" width="1.1" height="0.9" fill="#fff"/><rect x="17.85" y="5.95" width="1.1" height="0.9" fill="#fff"/><rect x="19.85" y="5.95" width="1.1" height="0.9" fill="#fff"/><path d="M21.4 6.4 H24.5 V14.9" fill="none" stroke="#e8e8e8" stroke-width="0.8"/><rect x="22.00" y="8.00" width="1.0" height="1.0" fill="#fff"/><rect x="22.00" y="10.00" width="1.0" height="1.0" fill="#fff"/><rect x="22.00" y="12.00" width="1.0" height="1.0" fill="#fff"/><rect x="22.00" y="14.00" width="1.0" height="1.0" fill="#fff"/><rect x="22.00" y="16.00" width="1.0" height="1.0" fill="#fff"/><rect x="26.00" y="6.00" width="1.0" height="1.0" fill="#fff"/><rect x="26.00" y="8.00" width="1.0" height="1.0" fill="#fff"/><rect x="26.00" y="10.00" width="1.0" height="1.0" fill="#fff"/><rect x="26.00" y="12.00" width="1.0" height="1.0" fill="#fff"/><rect x="26.00" y="14.00" width="1.0" height="1.0" fill="#fff"/><rect x="26.00" y="16.00" width="1.0" height="1.0" fill="#fff"/><rect x="24.00" y="16.00" width="1.0" height="1.0" fill="#fff"/><rect x="12" y="9.1" width="1.8" height="1.2" fill="#111"/><rect x="10.3" y="10.3" width="5.4" height="3.6" rx="1.2" fill="#111"/><path d="M11.2 13.3 V11.8 Q11.2 11.2 11.8 11.2 H14.2 Q14.8 11.2 14.8 11.8 V13.3 H13.8 V12.3 H12.2 V13.3 Z" fill="#fff"/><circle cx="13" cy="19.3" r="5.25" fill="#fff" stroke="#0c0c0c" stroke-width="1.25"/><path d="M7.8 18.8 L10.3 16.9 L13 19.1 L15.6 17.2 L18.2 18.9 A5.25 5.25 0 0 0 7.8 18.8 Z" fill="#383838"/><circle cx="10.8" cy="20.4" r="1.25" fill="#666"/><path d="M3.6 24.4 L7.6 24.9 V28.8 Z" fill="#f0f0f0" stroke="#111" stroke-width="0.65" stroke-linejoin="round"/><path d="M7.35 24.9 V28.7" stroke="#111" stroke-width="1"/><path d="M9.9 28.7 L12.5 25.9 L15.1 28.7 Z" fill="#f0f0f0" stroke="#111" stroke-width="0.7" stroke-linejoin="round"/><path d="M9.9 28.55 H15.1" stroke="#111" stroke-width="1"/><path d="M17.5 24.9 L21.9 24.2 L17.7 28.8 Z" fill="#f0f0f0" stroke="#111" stroke-width="0.65" stroke-linejoin="round"/><path d="M17.75 24.8 V28.6" stroke="#111" stroke-width="1"/></svg></div>
<div class="cell" style="left:238px;top:205px"><svg viewBox="0 0 32 32"><path d="M8 5.6 Q8 5 8.8 5 H11.6 V15.2 L8 13 Z" fill="#080808"/><path d="M9.4 7 H10.8 V13.2 L9.4 12.3 Z" fill="#909090"/><path d="M11.1 3.2 H19.8 V5.2 H21.8 V25.6 H10.9 V9.6 H11.1 Z" fill="#080808"/><rect x="12.6" y="4.4" width="1.5" height="4.5" fill="#8c8c8c"/><rect x="15.2" y="4.4" width="0.8" height="4.5" fill="#8c8c8c"/><rect x="17.1" y="4.4" width="1.5" height="4.5" fill="#8c8c8c"/><rect x="19.5" y="6.4" width="1.2" height="2.5" fill="#8c8c8c"/><rect x="12.1" y="10.4" width="8.8" height="4.5" fill="#fff"/><path d="M13 12.3 H14.6 M15.7 12.3 H17.3 M18.4 12.3 H20" stroke="#080808" stroke-width="0.9"/><rect x="12.1" y="16.9" width="8.8" height="1.8" fill="#fff"/><rect x="12.1" y="20.5" width="8.8" height="4.3" fill="#fff"/><path d="M12.6 21.3 H15 M15.7 21.3 H17.4 M18.2 21.3 H20.4" stroke="#080808" stroke-width="0.9"/><path d="M13.8 21.3 V22.8 M16.5 21.3 V22.8 M19.3 21.3 V22.8" stroke="#080808" stroke-width="0.9"/><rect x="9.8" y="25.2" width="13.6" height="3.6" rx="1.2" fill="#080808"/><rect x="11.2" y="26.6" width="10.9" height="1.1" fill="#b4b4b4"/></svg></div>
<div class="cell" style="left:270px;top:205px"><svg viewBox="0 0 32 32"><path d="M7.5 7.6 L10 5.3 H11.9 V20 H7.5 Z" fill="#f6f6f6" stroke="#141414" stroke-width="1.2" stroke-linejoin="round"/><path d="M9 8.2 V19.6" stroke="#3a3a3a" stroke-width="0.7"/><rect x="7.5" y="22.6" width="4.4" height="4.7" fill="#505050" stroke="#1c1c1c" stroke-width="0.9"/><path d="M8 24 H11.4 M8 25.6 H11.4" stroke="#9a9a9a" stroke-width="0.6"/><rect x="4.6" y="19.9" width="9.4" height="2.9" rx="1.4" fill="#f0f0f0" stroke="#141414" stroke-width="1.2"/><circle cx="22" cy="17.3" r="5.9" fill="#f4f4f4" stroke="#141414" stroke-width="1.4"/><circle cx="22" cy="17.3" r="4.2" fill="none" stroke="#3a3a3a" stroke-width="0.7" stroke-dasharray="2.3 1.0" stroke-dashoffset="1.1"/><rect x="19.7" y="15.1" width="4.6" height="4.5" rx="0.9" fill="#858585" stroke="#4a4a4a" stroke-width="0.9"/></svg></div>
<div class="cell" style="left:302px;top:205px"><svg viewBox="0 0 32 32"><path d="M8 5.6 Q8 5 8.8 5 H11.6 V15.2 L8 13 Z" fill="#080808"/><path d="M9.4 7 H10.8 V13.2 L9.4 12.3 Z" fill="#909090"/><path d="M11.1 3.2 H19.8 V5.2 H21.8 V25.6 H10.9 V9.6 H11.1 Z" fill="#080808"/><rect x="12.6" y="4.4" width="1.5" height="4.5" fill="#8c8c8c"/><rect x="15.2" y="4.4" width="0.8" height="4.5" fill="#8c8c8c"/><rect x="17.1" y="4.4" width="1.5" height="4.5" fill="#8c8c8c"/><rect x="19.5" y="6.4" width="1.2" height="2.5" fill="#8c8c8c"/><rect x="12.1" y="10.4" width="8.8" height="4.5" fill="#fff"/><path d="M13 12.3 H14.6 M15.7 12.3 H17.3 M18.4 12.3 H20" stroke="#080808" stroke-width="0.9"/><rect x="12.1" y="16.9" width="8.8" height="1.8" fill="#fff"/><rect x="12.1" y="20.5" width="8.8" height="4.3" fill="#fff"/><path d="M12.6 21.3 H15 M15.7 21.3 H17.4 M18.2 21.3 H20.4" stroke="#080808" stroke-width="0.9"/><path d="M13.8 21.3 V22.8 M16.5 21.3 V22.8 M19.3 21.3 V22.8" stroke="#080808" stroke-width="0.9"/><rect x="9.8" y="25.2" width="13.6" height="3.6" rx="1.2" fill="#080808"/><rect x="11.2" y="26.6" width="10.9" height="1.1" fill="#b4b4b4"/></svg></div>
<div class="cell" style="left:14px;top:237px"><svg viewBox="0 0 32 32"><path d="M8 5.6 Q8 5 8.8 5 H11.6 V15.2 L8 13 Z" fill="#080808"/><path d="M9.4 7 H10.8 V13.2 L9.4 12.3 Z" fill="#909090"/><path d="M11.1 3.2 H19.8 V5.2 H21.8 V25.6 H10.9 V9.6 H11.1 Z" fill="#080808"/><rect x="12.6" y="4.4" width="1.5" height="4.5" fill="#8c8c8c"/><rect x="15.2" y="4.4" width="0.8" height="4.5" fill="#8c8c8c"/><rect x="17.1" y="4.4" width="1.5" height="4.5" fill="#8c8c8c"/><rect x="19.5" y="6.4" width="1.2" height="2.5" fill="#8c8c8c"/><rect x="12.1" y="10.4" width="8.8" height="4.5" fill="#fff"/><path d="M13 12.3 H14.6 M15.7 12.3 H17.3 M18.4 12.3 H20" stroke="#080808" stroke-width="0.9"/><rect x="12.1" y="16.9" width="8.8" height="1.8" fill="#fff"/><rect x="12.1" y="20.5" width="8.8" height="4.3" fill="#fff"/><path d="M12.6 21.3 H15 M15.7 21.3 H17.4 M18.2 21.3 H20.4" stroke="#080808" stroke-width="0.9"/><path d="M13.8 21.3 V22.8 M16.5 21.3 V22.8 M19.3 21.3 V22.8" stroke="#080808" stroke-width="0.9"/><rect x="9.8" y="25.2" width="13.6" height="3.6" rx="1.2" fill="#080808"/><rect x="11.2" y="26.6" width="10.9" height="1.1" fill="#b4b4b4"/></svg></div>
<div class="cell" style="left:46px;top:237px"><svg viewBox="0 0 32 32"><path d="M8 5.6 Q8 5 8.8 5 H11.6 V15.2 L8 13 Z" fill="#080808"/><path d="M9.4 7 H10.8 V13.2 L9.4 12.3 Z" fill="#909090"/><path d="M11.1 3.2 H19.8 V5.2 H21.8 V25.6 H10.9 V9.6 H11.1 Z" fill="#080808"/><rect x="12.6" y="4.4" width="1.5" height="4.5" fill="#8c8c8c"/><rect x="15.2" y="4.4" width="0.8" height="4.5" fill="#8c8c8c"/><rect x="17.1" y="4.4" width="1.5" height="4.5" fill="#8c8c8c"/><rect x="19.5" y="6.4" width="1.2" height="2.5" fill="#8c8c8c"/><rect x="12.1" y="10.4" width="8.8" height="4.5" fill="#fff"/><path d="M13 12.3 H14.6 M15.7 12.3 H17.3 M18.4 12.3 H20" stroke="#080808" stroke-width="0.9"/><rect x="12.1" y="16.9" width="8.8" height="1.8" fill="#fff"/><rect x="12.1" y="20.5" width="8.8" height="4.3" fill="#fff"/><path d="M12.6 21.3 H15 M15.7 21.3 H17.4 M18.2 21.3 H20.4" stroke="#080808" stroke-width="0.9"/><path d="M13.8 21.3 V22.8 M16.5 21.3 V22.8 M19.3 21.3 V22.8" stroke="#080808" stroke-width="0.9"/><rect x="9.8" y="25.2" width="13.6" height="3.6" rx="1.2" fill="#080808"/><rect x="11.2" y="26.6" width="10.9" height="1.1" fill="#b4b4b4"/></svg></div>
<div class="cell" style="left:78px;top:237px"><svg viewBox="0 0 32 32"><path d="M8 5.6 Q8 5 8.8 5 H11.6 V15.2 L8 13 Z" fill="#080808"/><path d="M9.4 7 H10.8 V13.2 L9.4 12.3 Z" fill="#909090"/><path d="M11.1 3.2 H19.8 V5.2 H21.8 V25.6 H10.9 V9.6 H11.1 Z" fill="#080808"/><rect x="12.6" y="4.4" width="1.5" height="4.5" fill="#8c8c8c"/><rect x="15.2" y="4.4" width="0.8" height="4.5" fill="#8c8c8c"/><rect x="17.1" y="4.4" width="1.5" height="4.5" fill="#8c8c8c"/><rect x="19.5" y="6.4" width="1.2" height="2.5" fill="#8c8c8c"/><rect x="12.1" y="10.4" width="8.8" height="4.5" fill="#fff"/><path d="M13 12.3 H14.6 M15.7 12.3 H17.3 M18.4 12.3 H20" stroke="#080808" stroke-width="0.9"/><rect x="12.1" y="16.9" width="8.8" height="1.8" fill="#fff"/><rect x="12.1" y="20.5" width="8.8" height="4.3" fill="#fff"/><path d="M12.6 21.3 H15 M15.7 21.3 H17.4 M18.2 21.3 H20.4" stroke="#080808" stroke-width="0.9"/><path d="M13.8 21.3 V22.8 M16.5 21.3 V22.8 M19.3 21.3 V22.8" stroke="#080808" stroke-width="0.9"/><rect x="9.8" y="25.2" width="13.6" height="3.6" rx="1.2" fill="#080808"/><rect x="11.2" y="26.6" width="10.9" height="1.1" fill="#b4b4b4"/></svg></div>
<div class="cell" style="left:110px;top:237px"><svg viewBox="0 0 32 32"><path d="M8 5.6 Q8 5 8.8 5 H11.6 V15.2 L8 13 Z" fill="#080808"/><path d="M9.4 7 H10.8 V13.2 L9.4 12.3 Z" fill="#909090"/><path d="M11.1 3.2 H19.8 V5.2 H21.8 V25.6 H10.9 V9.6 H11.1 Z" fill="#080808"/><rect x="12.6" y="4.4" width="1.5" height="4.5" fill="#8c8c8c"/><rect x="15.2" y="4.4" width="0.8" height="4.5" fill="#8c8c8c"/><rect x="17.1" y="4.4" width="1.5" height="4.5" fill="#8c8c8c"/><rect x="19.5" y="6.4" width="1.2" height="2.5" fill="#8c8c8c"/><rect x="12.1" y="10.4" width="8.8" height="4.5" fill="#fff"/><path d="M13 12.3 H14.6 M15.7 12.3 H17.3 M18.4 12.3 H20" stroke="#080808" stroke-width="0.9"/><rect x="12.1" y="16.9" width="8.8" height="1.8" fill="#fff"/><rect x="12.1" y="20.5" width="8.8" height="4.3" fill="#fff"/><path d="M12.6 21.3 H15 M15.7 21.3 H17.4 M18.2 21.3 H20.4" stroke="#080808" stroke-width="0.9"/><path d="M13.8 21.3 V22.8 M16.5 21.3 V22.8 M19.3 21.3 V22.8" stroke="#080808" stroke-width="0.9"/><rect x="9.8" y="25.2" width="13.6" height="3.6" rx="1.2" fill="#080808"/><rect x="11.2" y="26.6" width="10.9" height="1.1" fill="#b4b4b4"/></svg></div>
<div class="cell" style="left:142px;top:237px"><svg viewBox="0 0 32 32"><path d="M8 5.6 Q8 5 8.8 5 H11.6 V15.2 L8 13 Z" fill="#080808"/><path d="M9.4 7 H10.8 V13.2 L9.4 12.3 Z" fill="#909090"/><path d="M11.1 3.2 H19.8 V5.2 H21.8 V25.6 H10.9 V9.6 H11.1 Z" fill="#080808"/><rect x="12.6" y="4.4" width="1.5" height="4.5" fill="#8c8c8c"/><rect x="15.2" y="4.4" width="0.8" height="4.5" fill="#8c8c8c"/><rect x="17.1" y="4.4" width="1.5" height="4.5" fill="#8c8c8c"/><rect x="19.5" y="6.4" width="1.2" height="2.5" fill="#8c8c8c"/><rect x="12.1" y="10.4" width="8.8" height="4.5" fill="#fff"/><path d="M13 12.3 H14.6 M15.7 12.3 H17.3 M18.4 12.3 H20" stroke="#080808" stroke-width="0.9"/><rect x="12.1" y="16.9" width="8.8" height="1.8" fill="#fff"/><rect x="12.1" y="20.5" width="8.8" height="4.3" fill="#fff"/><path d="M12.6 21.3 H15 M15.7 21.3 H17.4 M18.2 21.3 H20.4" stroke="#080808" stroke-width="0.9"/><path d="M13.8 21.3 V22.8 M16.5 21.3 V22.8 M19.3 21.3 V22.8" stroke="#080808" stroke-width="0.9"/><rect x="9.8" y="25.2" width="13.6" height="3.6" rx="1.2" fill="#080808"/><rect x="11.2" y="26.6" width="10.9" height="1.1" fill="#b4b4b4"/></svg></div>
<div class="cell" style="left:174px;top:237px"><svg viewBox="0 0 32 32"><path d="M8 5.6 Q8 5 8.8 5 H11.6 V15.2 L8 13 Z" fill="#080808"/><path d="M9.4 7 H10.8 V13.2 L9.4 12.3 Z" fill="#909090"/><path d="M11.1 3.2 H19.8 V5.2 H21.8 V25.6 H10.9 V9.6 H11.1 Z" fill="#080808"/><rect x="12.6" y="4.4" width="1.5" height="4.5" fill="#8c8c8c"/><rect x="15.2" y="4.4" width="0.8" height="4.5" fill="#8c8c8c"/><rect x="17.1" y="4.4" width="1.5" height="4.5" fill="#8c8c8c"/><rect x="19.5" y="6.4" width="1.2" height="2.5" fill="#8c8c8c"/><rect x="12.1" y="10.4" width="8.8" height="4.5" fill="#fff"/><path d="M13 12.3 H14.6 M15.7 12.3 H17.3 M18.4 12.3 H20" stroke="#080808" stroke-width="0.9"/><rect x="12.1" y="16.9" width="8.8" height="1.8" fill="#fff"/><rect x="12.1" y="20.5" width="8.8" height="4.3" fill="#fff"/><path d="M12.6 21.3 H15 M15.7 21.3 H17.4 M18.2 21.3 H20.4" stroke="#080808" stroke-width="0.9"/><path d="M13.8 21.3 V22.8 M16.5 21.3 V22.8 M19.3 21.3 V22.8" stroke="#080808" stroke-width="0.9"/><rect x="9.8" y="25.2" width="13.6" height="3.6" rx="1.2" fill="#080808"/><rect x="11.2" y="26.6" width="10.9" height="1.1" fill="#b4b4b4"/></svg></div>
<div class="cell" style="left:206px;top:237px"><svg viewBox="0 0 32 32"><path d="M14.5 3.4 Q11 4 8.6 6.2 Q5.6 9.2 5.5 13 Q5.8 16.6 8.2 19.6 L12.8 17.6 Q10.4 14.4 10.2 11.4 Q10.2 8 12.2 5.4 Q13.2 4.2 14.5 3.4 Z" fill="#f4f4f4" stroke="#0e0e0e" stroke-width="1.45" stroke-linejoin="round"/><path d="M11.6 5.6 Q9 8.6 9 12 Q9.4 15.4 11.4 18" fill="none" stroke="#cfcfcf" stroke-width="0.9"/><g transform="translate(32.2 0) scale(-1 1)"><path d="M14.5 3.4 Q11 4 8.6 6.2 Q5.6 9.2 5.5 13 Q5.8 16.6 8.2 19.6 L12.8 17.6 Q10.4 14.4 10.2 11.4 Q10.2 8 12.2 5.4 Q13.2 4.2 14.5 3.4 Z" fill="#f4f4f4" stroke="#0e0e0e" stroke-width="1.45" stroke-linejoin="round"/><path d="M11.6 5.6 Q9 8.6 9 12 Q9.4 15.4 11.4 18" fill="none" stroke="#cfcfcf" stroke-width="0.9"/></g><path d="M11.6 22 L14 23.4 M12 22.2 L13.6 24" stroke="#1a1a1a" stroke-width="1.6"/><ellipse cx="12.9" cy="25.7" rx="2.2" ry="2.4" fill="#555" stroke="#222" stroke-width="1"/><g transform="translate(32.2 0) scale(-1 1)"><path d="M11.6 22 L14 23.4 M12 22.2 L13.6 24" stroke="#1a1a1a" stroke-width="1.6"/><ellipse cx="12.9" cy="25.7" rx="2.2" ry="2.4" fill="#555" stroke="#222" stroke-width="1"/></g><path d="M4.9 21.8 L14.4 18.1 Q15.9 18.6 15.7 20.8 L6.4 24.9 Q4.4 24.2 4.9 21.8 Z" fill="#efefef" stroke="#0e0e0e" stroke-width="1.45" stroke-linejoin="round"/><g transform="translate(32.2 0) scale(-1 1)"><path d="M4.9 21.8 L14.4 18.1 Q15.9 18.6 15.7 20.8 L6.4 24.9 Q4.4 24.2 4.9 21.8 Z" fill="#efefef" stroke="#0e0e0e" stroke-width="1.45" stroke-linejoin="round"/></g><path d="M16.1 18 V21.2" stroke="#151515" stroke-width="1.8"/></svg></div>
<div class="cell" style="left:238px;top:237px"><svg viewBox="0 0 32 32"><path d="M14 2.9 H26 V4.9 H27.9 V17.7 H21.3 V7.8 H12 V4.9 H14 Z" fill="#0c0c0c"/><rect x="13.85" y="3.95" width="1.1" height="0.9" fill="#fff"/><rect x="15.85" y="3.95" width="1.1" height="0.9" fill="#fff"/><rect x="17.85" y="3.95" width="1.1" height="0.9" fill="#fff"/><rect x="19.85" y="3.95" width="1.1" height="0.9" fill="#fff"/><rect x="21.85" y="3.95" width="1.1" height="0.9" fill="#fff"/><rect x="23.85" y="3.95" width="1.1" height="0.9" fill="#fff"/><rect x="11.95" y="5.95" width="1.1" height="0.9" fill="#fff"/><rect x="13.85" y="5.95" width="1.1" height="0.9" fill="#fff"/><rect x="15.85" y="5.95" width="1.1" height="0.9" fill="#fff"/><rect x="17.85" y="5.95" width="1.1" height="0.9" fill="#fff"/><rect x="19.85" y="5.95" width="1.1" height="0.9" fill="#fff"/><path d="M21.4 6.4 H24.5 V14.9" fill="none" stroke="#e8e8e8" stroke-width="0.8"/><rect x="22.00" y="8.00" width="1.0" height="1.0" fill="#fff"/><rect x="22.00" y="10.00" width="1.0" height="1.0" fill="#fff"/><rect x="22.00" y="12.00" width="1.0" height="1.0" fill="#fff"/><rect x="22.00" y="14.00" width="1.0" height="1.0" fill="#fff"/><rect x="22.00" y="16.00" width="1.0" height="1.0" fill="#fff"/><rect x="26.00" y="6.00" width="1.0" height="1.0" fill="#fff"/><rect x="26.00" y="8.00" width="1.0" height="1.0" fill="#fff"/><rect x="26.00" y="10.00" width="1.0" height="1.0" fill="#fff"/><rect x="26.00" y="12.00" width="1.0" height="1.0" fill="#fff"/><rect x="26.00" y="14.00" width="1.0" height="1.0" fill="#fff"/><rect x="26.00" y="16.00" width="1.0" height="1.0" fill="#fff"/><rect x="24.00" y="16.00" width="1.0" height="1.0" fill="#fff"/><rect x="12" y="9.1" width="1.8" height="1.2" fill="#111"/><rect x="10.3" y="10.3" width="5.4" height="3.6" rx="1.2" fill="#111"/><path d="M11.2 13.3 V11.8 Q11.2 11.2 11.8 11.2 H14.2 Q14.8 11.2 14.8 11.8 V13.3 H13.8 V12.3 H12.2 V13.3 Z" fill="#fff"/><circle cx="13" cy="19.3" r="5.25" fill="#fff" stroke="#0c0c0c" stroke-width="1.25"/><path d="M7.8 18.8 L10.3 16.9 L13 19.1 L15.6 17.2 L18.2 18.9 A5.25 5.25 0 0 0 7.8 18.8 Z" fill="#383838"/><circle cx="10.8" cy="20.4" r="1.25" fill="#666"/><path d="M3.6 24.4 L7.6 24.9 V28.8 Z" fill="#f0f0f0" stroke="#111" stroke-width="0.65" stroke-linejoin="round"/><path d="M7.35 24.9 V28.7" stroke="#111" stroke-width="1"/><path d="M9.9 28.7 L12.5 25.9 L15.1 28.7 Z" fill="#f0f0f0" stroke="#111" stroke-width="0.7" stroke-linejoin="round"/><path d="M9.9 28.55 H15.1" stroke="#111" stroke-width="1"/><path d="M17.5 24.9 L21.9 24.2 L17.7 28.8 Z" fill="#f0f0f0" stroke="#111" stroke-width="0.65" stroke-linejoin="round"/><path d="M17.75 24.8 V28.6" stroke="#111" stroke-width="1"/></svg></div>
<div class="cell" style="left:270px;top:237px"><svg viewBox="0 0 32 32"><path d="M14 2.9 H26 V4.9 H27.9 V17.7 H21.3 V7.8 H12 V4.9 H14 Z" fill="#0c0c0c"/><rect x="13.85" y="3.95" width="1.1" height="0.9" fill="#fff"/><rect x="15.85" y="3.95" width="1.1" height="0.9" fill="#fff"/><rect x="17.85" y="3.95" width="1.1" height="0.9" fill="#fff"/><rect x="19.85" y="3.95" width="1.1" height="0.9" fill="#fff"/><rect x="21.85" y="3.95" width="1.1" height="0.9" fill="#fff"/><rect x="23.85" y="3.95" width="1.1" height="0.9" fill="#fff"/><rect x="11.95" y="5.95" width="1.1" height="0.9" fill="#fff"/><rect x="13.85" y="5.95" width="1.1" height="0.9" fill="#fff"/><rect x="15.85" y="5.95" width="1.1" height="0.9" fill="#fff"/><rect x="17.85" y="5.95" width="1.1" height="0.9" fill="#fff"/><rect x="19.85" y="5.95" width="1.1" height="0.9" fill="#fff"/><path d="M21.4 6.4 H24.5 V14.9" fill="none" stroke="#e8e8e8" stroke-width="0.8"/><rect x="22.00" y="8.00" width="1.0" height="1.0" fill="#fff"/><rect x="22.00" y="10.00" width="1.0" height="1.0" fill="#fff"/><rect x="22.00" y="12.00" width="1.0" height="1.0" fill="#fff"/><rect x="22.00" y="14.00" width="1.0" height="1.0" fill="#fff"/><rect x="22.00" y="16.00" width="1.0" height="1.0" fill="#fff"/><rect x="26.00" y="6.00" width="1.0" height="1.0" fill="#fff"/><rect x="26.00" y="8.00" width="1.0" height="1.0" fill="#fff"/><rect x="26.00" y="10.00" width="1.0" height="1.0" fill="#fff"/><rect x="26.00" y="12.00" width="1.0" height="1.0" fill="#fff"/><rect x="26.00" y="14.00" width="1.0" height="1.0" fill="#fff"/><rect x="26.00" y="16.00" width="1.0" height="1.0" fill="#fff"/><rect x="24.00" y="16.00" width="1.0" height="1.0" fill="#fff"/><rect x="12" y="9.1" width="1.8" height="1.2" fill="#111"/><rect x="10.3" y="10.3" width="5.4" height="3.6" rx="1.2" fill="#111"/><path d="M11.2 13.3 V11.8 Q11.2 11.2 11.8 11.2 H14.2 Q14.8 11.2 14.8 11.8 V13.3 H13.8 V12.3 H12.2 V13.3 Z" fill="#fff"/><circle cx="13" cy="19.3" r="5.25" fill="#fff" stroke="#0c0c0c" stroke-width="1.25"/><path d="M7.8 18.8 L10.3 16.9 L13 19.1 L15.6 17.2 L18.2 18.9 A5.25 5.25 0 0 0 7.8 18.8 Z" fill="#383838"/><circle cx="10.8" cy="20.4" r="1.25" fill="#666"/><path d="M3.6 24.4 L7.6 24.9 V28.8 Z" fill="#f0f0f0" stroke="#111" stroke-width="0.65" stroke-linejoin="round"/><path d="M7.35 24.9 V28.7" stroke="#111" stroke-width="1"/><path d="M9.9 28.7 L12.5 25.9 L15.1 28.7 Z" fill="#f0f0f0" stroke="#111" stroke-width="0.7" stroke-linejoin="round"/><path d="M9.9 28.55 H15.1" stroke="#111" stroke-width="1"/><path d="M17.5 24.9 L21.9 24.2 L17.7 28.8 Z" fill="#f0f0f0" stroke="#111" stroke-width="0.65" stroke-linejoin="round"/><path d="M17.75 24.8 V28.6" stroke="#111" stroke-width="1"/></svg></div>
<div class="cell" style="left:302px;top:237px"><svg viewBox="0 0 32 32"><path d="M12.8 7.2 L15.7 3.5 L18.6 7.2 Z" fill="#222"/><path d="M8.3 9.4 L4 12.3 L8.3 15.3 Z" fill="#222"/><path d="M23.7 9.4 L27.3 12.3 L23.7 15.3 Z" fill="#222"/><circle cx="15.7" cy="6" r="0.7" fill="#ccc"/><circle cx="6.6" cy="12.3" r="0.8" fill="#ccc"/><circle cx="25" cy="12.3" r="0.8" fill="#ccc"/><rect x="8.4" y="7.3" width="15.2" height="10" rx="1.2" fill="#8a8a8a" stroke="#222" stroke-width="1.3"/><rect x="9.6" y="8.5" width="12.8" height="7.6" fill="none" stroke="#a8a8a8" stroke-width="0.7"/><rect x="12.5" y="9.8" width="6.2" height="5" rx="1.2" fill="#d4d4d4" stroke="#333" stroke-width="1"/><path d="M14.9 11.4 L16.7 12.3 L14.9 13.2 Z" fill="#111"/><rect x="13.6" y="17.4" width="4.4" height="10.6" rx="1" fill="#777" stroke="#222" stroke-width="1.2"/><path d="M14.3 19.6 H17.3 M14.3 21.4 H17.3 M14.3 23.2 H17.3" stroke="#c8c8c8" stroke-width="0.8"/><rect x="15" y="24.6" width="1.6" height="2.4" rx="0.6" fill="#fff"/></svg></div>
<div class="cell" style="left:14px;top:269px"><svg viewBox="0 0 32 32"><path d="M14 2.9 H26 V4.9 H27.9 V17.7 H21.3 V7.8 H12 V4.9 H14 Z" fill="#0c0c0c"/><rect x="13.85" y="3.95" width="1.1" height="0.9" fill="#fff"/><rect x="15.85" y="3.95" width="1.1" height="0.9" fill="#fff"/><rect x="17.85" y="3.95" width="1.1" height="0.9" fill="#fff"/><rect x="19.85" y="3.95" width="1.1" height="0.9" fill="#fff"/><rect x="21.85" y="3.95" width="1.1" height="0.9" fill="#fff"/><rect x="23.85" y="3.95" width="1.1" height="0.9" fill="#fff"/><rect x="11.95" y="5.95" width="1.1" height="0.9" fill="#fff"/><rect x="13.85" y="5.95" width="1.1" height="0.9" fill="#fff"/><rect x="15.85" y="5.95" width="1.1" height="0.9" fill="#fff"/><rect x="17.85" y="5.95" width="1.1" height="0.9" fill="#fff"/><rect x="19.85" y="5.95" width="1.1" height="0.9" fill="#fff"/><path d="M21.4 6.4 H24.5 V14.9" fill="none" stroke="#e8e8e8" stroke-width="0.8"/><rect x="22.00" y="8.00" width="1.0" height="1.0" fill="#fff"/><rect x="22.00" y="10.00" width="1.0" height="1.0" fill="#fff"/><rect x="22.00" y="12.00" width="1.0" height="1.0" fill="#fff"/><rect x="22.00" y="14.00" width="1.0" height="1.0" fill="#fff"/><rect x="22.00" y="16.00" width="1.0" height="1.0" fill="#fff"/><rect x="26.00" y="6.00" width="1.0" height="1.0" fill="#fff"/><rect x="26.00" y="8.00" width="1.0" height="1.0" fill="#fff"/><rect x="26.00" y="10.00" width="1.0" height="1.0" fill="#fff"/><rect x="26.00" y="12.00" width="1.0" height="1.0" fill="#fff"/><rect x="26.00" y="14.00" width="1.0" height="1.0" fill="#fff"/><rect x="26.00" y="16.00" width="1.0" height="1.0" fill="#fff"/><rect x="24.00" y="16.00" width="1.0" height="1.0" fill="#fff"/><rect x="12" y="9.1" width="1.8" height="1.2" fill="#111"/><rect x="10.3" y="10.3" width="5.4" height="3.6" rx="1.2" fill="#111"/><path d="M11.2 13.3 V11.8 Q11.2 11.2 11.8 11.2 H14.2 Q14.8 11.2 14.8 11.8 V13.3 H13.8 V12.3 H12.2 V13.3 Z" fill="#fff"/><circle cx="13" cy="19.3" r="5.25" fill="#fff" stroke="#0c0c0c" stroke-width="1.25"/><path d="M7.8 18.8 L10.3 16.9 L13 19.1 L15.6 17.2 L18.2 18.9 A5.25 5.25 0 0 0 7.8 18.8 Z" fill="#383838"/><circle cx="10.8" cy="20.4" r="1.25" fill="#666"/><path d="M3.6 24.4 L7.6 24.9 V28.8 Z" fill="#f0f0f0" stroke="#111" stroke-width="0.65" stroke-linejoin="round"/><path d="M7.35 24.9 V28.7" stroke="#111" stroke-width="1"/><path d="M9.9 28.7 L12.5 25.9 L15.1 28.7 Z" fill="#f0f0f0" stroke="#111" stroke-width="0.7" stroke-linejoin="round"/><path d="M9.9 28.55 H15.1" stroke="#111" stroke-width="1"/><path d="M17.5 24.9 L21.9 24.2 L17.7 28.8 Z" fill="#f0f0f0" stroke="#111" stroke-width="0.65" stroke-linejoin="round"/><path d="M17.75 24.8 V28.6" stroke="#111" stroke-width="1"/></svg></div>
<div class="cell" style="left:46px;top:269px"><svg viewBox="0 0 32 32"><path d="M12.8 6.9 Q6 6.2 4.6 8.2 V12.8 L5.9 15.4 L3.7 17 V18.7 L7.4 18.4 L8.6 16 L8.2 10.8 Q10 10.2 12.8 11.7 Z" fill="#f2f2f2" stroke="#222" stroke-width="1.1" stroke-linejoin="round"/><path d="M19.4 6.9 Q26.2 6.2 27.5 8.2 V12.8 L26.3 15.4 L28.5 17 V18.7 L24.7 18.4 L23.6 16 L24 10.8 Q22.2 10.2 19.4 11.7 Z" fill="#f2f2f2" stroke="#222" stroke-width="1.1" stroke-linejoin="round"/><path d="M21.4 17 H23.4 V21.4 H25.4 V23.4 H21.4 Z" fill="#bbb" stroke="#222" stroke-width="0.9"/><rect x="13.4" y="4.4" width="5.2" height="2.6" fill="#e4e4e4" stroke="#222" stroke-width="1"/><rect x="12.6" y="7" width="6.8" height="5.2" fill="#a4a4a4" stroke="#222" stroke-width="1"/><path d="M14.8 7.4 V11.8 M17 7.4 V11.8 M13 9.6 H19" stroke="#bdbdbd" stroke-width="0.6"/><rect x="13.4" y="12.2" width="5.2" height="2" fill="#eee" stroke="#222" stroke-width="0.9"/><rect x="12.9" y="14.2" width="6.2" height="6.6" fill="#999" stroke="#222" stroke-width="1"/><rect x="11.3" y="20.6" width="9.6" height="7" fill="#b8b8b8" stroke="#222" stroke-width="1.1"/><rect x="15.1" y="16.4" width="2" height="7" rx="0.9" fill="#555" stroke="#222" stroke-width="0.8"/></svg></div>
<div class="cell" style="left:78px;top:269px"><svg viewBox="0 0 32 32"><path d="M20.3 3.8 H27 V5.8 H25.7 V21 H21.9 V5.8 H20.3 Z" fill="#ececec" stroke="#222" stroke-width="1.3" stroke-linejoin="round"/><path d="M22 8.6 H25.6 M22 11.6 H25.6" stroke="#222" stroke-width="0.8"/><path d="M22.6 4.6 L23.7 5.8 L24.8 4.6" stroke="#222" stroke-width="0.9" fill="none"/><path d="M9.6 5.6 L14.8 8 L13.4 10.4 L11.6 9.6 L11.2 12.8 L7.2 13.2 L6.4 11.4 L9.2 10.2 Z" fill="#f4f4f4" stroke="#222" stroke-width="1.3" stroke-linejoin="round"/><path d="M21.8 14.4 H10 L4.8 18.6 L5.2 21.4 L12.2 26.6 L19.2 25.6 L27.6 18.2 L25.8 17.6 L21.8 20.4 Z" fill="#ededed" stroke="#222" stroke-width="1.3" stroke-linejoin="round"/><path d="M20.4 16.2 H11 L7.4 19 L9 21 L16.8 22.4 L21 18.6" fill="none" stroke="#222" stroke-width="1.3" stroke-linejoin="round"/><path d="M11.6 20.4 L12.4 17.6 L14.8 20.2 Z" fill="#222"/><path d="M5.6 24.4 L8 23.6 L7.4 26 Z M11.4 26.2 L13.6 27.4 L12.2 28 Z" fill="#222"/><rect x="21" y="21.4" width="3.8" height="3.8" fill="#999" stroke="#222" stroke-width="1"/></svg></div>
<div class="cell" style="left:110px;top:269px"><svg viewBox="0 0 32 32"><path d="M14 2.9 H26 V4.9 H27.9 V17.7 H21.3 V7.8 H12 V4.9 H14 Z" fill="#0c0c0c"/><rect x="13.85" y="3.95" width="1.1" height="0.9" fill="#fff"/><rect x="15.85" y="3.95" width="1.1" height="0.9" fill="#fff"/><rect x="17.85" y="3.95" width="1.1" height="0.9" fill="#fff"/><rect x="19.85" y="3.95" width="1.1" height="0.9" fill="#fff"/><rect x="21.85" y="3.95" width="1.1" height="0.9" fill="#fff"/><rect x="23.85" y="3.95" width="1.1" height="0.9" fill="#fff"/><rect x="11.95" y="5.95" width="1.1" height="0.9" fill="#fff"/><rect x="13.85" y="5.95" width="1.1" height="0.9" fill="#fff"/><rect x="15.85" y="5.95" width="1.1" height="0.9" fill="#fff"/><rect x="17.85" y="5.95" width="1.1" height="0.9" fill="#fff"/><rect x="19.85" y="5.95" width="1.1" height="0.9" fill="#fff"/><path d="M21.4 6.4 H24.5 V14.9" fill="none" stroke="#e8e8e8" stroke-width="0.8"/><rect x="22.00" y="8.00" width="1.0" height="1.0" fill="#fff"/><rect x="22.00" y="10.00" width="1.0" height="1.0" fill="#fff"/><rect x="22.00" y="12.00" width="1.0" height="1.0" fill="#fff"/><rect x="22.00" y="14.00" width="1.0" height="1.0" fill="#fff"/><rect x="22.00" y="16.00" width="1.0" height="1.0" fill="#fff"/><rect x="26.00" y="6.00" width="1.0" height="1.0" fill="#fff"/><rect x="26.00" y="8.00" width="1.0" height="1.0" fill="#fff"/><rect x="26.00" y="10.00" width="1.0" height="1.0" fill="#fff"/><rect x="26.00" y="12.00" width="1.0" height="1.0" fill="#fff"/><rect x="26.00" y="14.00" width="1.0" height="1.0" fill="#fff"/><rect x="26.00" y="16.00" width="1.0" height="1.0" fill="#fff"/><rect x="24.00" y="16.00" width="1.0" height="1.0" fill="#fff"/><rect x="12" y="9.1" width="1.8" height="1.2" fill="#111"/><rect x="10.3" y="10.3" width="5.4" height="3.6" rx="1.2" fill="#111"/><path d="M11.2 13.3 V11.8 Q11.2 11.2 11.8 11.2 H14.2 Q14.8 11.2 14.8 11.8 V13.3 H13.8 V12.3 H12.2 V13.3 Z" fill="#fff"/><circle cx="13" cy="19.3" r="5.25" fill="#fff" stroke="#0c0c0c" stroke-width="1.25"/><path d="M7.8 18.8 L10.3 16.9 L13 19.1 L15.6 17.2 L18.2 18.9 A5.25 5.25 0 0 0 7.8 18.8 Z" fill="#383838"/><circle cx="10.8" cy="20.4" r="1.25" fill="#666"/><path d="M3.6 24.4 L7.6 24.9 V28.8 Z" fill="#f0f0f0" stroke="#111" stroke-width="0.65" stroke-linejoin="round"/><path d="M7.35 24.9 V28.7" stroke="#111" stroke-width="1"/><path d="M9.9 28.7 L12.5 25.9 L15.1 28.7 Z" fill="#f0f0f0" stroke="#111" stroke-width="0.7" stroke-linejoin="round"/><path d="M9.9 28.55 H15.1" stroke="#111" stroke-width="1"/><path d="M17.5 24.9 L21.9 24.2 L17.7 28.8 Z" fill="#f0f0f0" stroke="#111" stroke-width="0.65" stroke-linejoin="round"/><path d="M17.75 24.8 V28.6" stroke="#111" stroke-width="1"/></svg></div>
<div class="cell" style="left:142px;top:269px"><svg viewBox="0 0 32 32"><path d="M8 5.6 Q8 5 8.8 5 H11.6 V15.2 L8 13 Z" fill="#080808"/><path d="M9.4 7 H10.8 V13.2 L9.4 12.3 Z" fill="#909090"/><path d="M11.1 3.2 H19.8 V5.2 H21.8 V25.6 H10.9 V9.6 H11.1 Z" fill="#080808"/><rect x="12.6" y="4.4" width="1.5" height="4.5" fill="#8c8c8c"/><rect x="15.2" y="4.4" width="0.8" height="4.5" fill="#8c8c8c"/><rect x="17.1" y="4.4" width="1.5" height="4.5" fill="#8c8c8c"/><rect x="19.5" y="6.4" width="1.2" height="2.5" fill="#8c8c8c"/><rect x="12.1" y="10.4" width="8.8" height="4.5" fill="#fff"/><path d="M13 12.3 H14.6 M15.7 12.3 H17.3 M18.4 12.3 H20" stroke="#080808" stroke-width="0.9"/><rect x="12.1" y="16.9" width="8.8" height="1.8" fill="#fff"/><rect x="12.1" y="20.5" width="8.8" height="4.3" fill="#fff"/><path d="M12.6 21.3 H15 M15.7 21.3 H17.4 M18.2 21.3 H20.4" stroke="#080808" stroke-width="0.9"/><path d="M13.8 21.3 V22.8 M16.5 21.3 V22.8 M19.3 21.3 V22.8" stroke="#080808" stroke-width="0.9"/><rect x="9.8" y="25.2" width="13.6" height="3.6" rx="1.2" fill="#080808"/><rect x="11.2" y="26.6" width="10.9" height="1.1" fill="#b4b4b4"/></svg></div>
<div class="cell" style="left:174px;top:269px"><svg viewBox="0 0 32 32"><path d="M8 5.6 Q8 5 8.8 5 H11.6 V15.2 L8 13 Z" fill="#080808"/><path d="M9.4 7 H10.8 V13.2 L9.4 12.3 Z" fill="#909090"/><path d="M11.1 3.2 H19.8 V5.2 H21.8 V25.6 H10.9 V9.6 H11.1 Z" fill="#080808"/><rect x="12.6" y="4.4" width="1.5" height="4.5" fill="#8c8c8c"/><rect x="15.2" y="4.4" width="0.8" height="4.5" fill="#8c8c8c"/><rect x="17.1" y="4.4" width="1.5" height="4.5" fill="#8c8c8c"/><rect x="19.5" y="6.4" width="1.2" height="2.5" fill="#8c8c8c"/><rect x="12.1" y="10.4" width="8.8" height="4.5" fill="#fff"/><path d="M13 12.3 H14.6 M15.7 12.3 H17.3 M18.4 12.3 H20" stroke="#080808" stroke-width="0.9"/><rect x="12.1" y="16.9" width="8.8" height="1.8" fill="#fff"/><rect x="12.1" y="20.5" width="8.8" height="4.3" fill="#fff"/><path d="M12.6 21.3 H15 M15.7 21.3 H17.4 M18.2 21.3 H20.4" stroke="#080808" stroke-width="0.9"/><path d="M13.8 21.3 V22.8 M16.5 21.3 V22.8 M19.3 21.3 V22.8" stroke="#080808" stroke-width="0.9"/><rect x="9.8" y="25.2" width="13.6" height="3.6" rx="1.2" fill="#080808"/><rect x="11.2" y="26.6" width="10.9" height="1.1" fill="#b4b4b4"/></svg></div>
<div class="cell" style="left:206px;top:269px"><svg viewBox="0 0 32 32"><path d="M12.8 7.2 L15.7 3.5 L18.6 7.2 Z" fill="#222"/><path d="M8.3 9.4 L4 12.3 L8.3 15.3 Z" fill="#222"/><path d="M23.7 9.4 L27.3 12.3 L23.7 15.3 Z" fill="#222"/><circle cx="15.7" cy="6" r="0.7" fill="#ccc"/><circle cx="6.6" cy="12.3" r="0.8" fill="#ccc"/><circle cx="25" cy="12.3" r="0.8" fill="#ccc"/><rect x="8.4" y="7.3" width="15.2" height="10" rx="1.2" fill="#8a8a8a" stroke="#222" stroke-width="1.3"/><rect x="9.6" y="8.5" width="12.8" height="7.6" fill="none" stroke="#a8a8a8" stroke-width="0.7"/><rect x="12.5" y="9.8" width="6.2" height="5" rx="1.2" fill="#d4d4d4" stroke="#333" stroke-width="1"/><path d="M14.9 11.4 L16.7 12.3 L14.9 13.2 Z" fill="#111"/><rect x="13.6" y="17.4" width="4.4" height="10.6" rx="1" fill="#777" stroke="#222" stroke-width="1.2"/><path d="M14.3 19.6 H17.3 M14.3 21.4 H17.3 M14.3 23.2 H17.3" stroke="#c8c8c8" stroke-width="0.8"/><rect x="15" y="24.6" width="1.6" height="2.4" rx="0.6" fill="#fff"/></svg></div>
<div class="cell" style="left:238px;top:269px"><svg viewBox="0 0 32 32"><path d="M8 5.6 Q8 5 8.8 5 H11.6 V15.2 L8 13 Z" fill="#080808"/><path d="M9.4 7 H10.8 V13.2 L9.4 12.3 Z" fill="#909090"/><path d="M11.1 3.2 H19.8 V5.2 H21.8 V25.6 H10.9 V9.6 H11.1 Z" fill="#080808"/><rect x="12.6" y="4.4" width="1.5" height="4.5" fill="#8c8c8c"/><rect x="15.2" y="4.4" width="0.8" height="4.5" fill="#8c8c8c"/><rect x="17.1" y="4.4" width="1.5" height="4.5" fill="#8c8c8c"/><rect x="19.5" y="6.4" width="1.2" height="2.5" fill="#8c8c8c"/><rect x="12.1" y="10.4" width="8.8" height="4.5" fill="#fff"/><path d="M13 12.3 H14.6 M15.7 12.3 H17.3 M18.4 12.3 H20" stroke="#080808" stroke-width="0.9"/><rect x="12.1" y="16.9" width="8.8" height="1.8" fill="#fff"/><rect x="12.1" y="20.5" width="8.8" height="4.3" fill="#fff"/><path d="M12.6 21.3 H15 M15.7 21.3 H17.4 M18.2 21.3 H20.4" stroke="#080808" stroke-width="0.9"/><path d="M13.8 21.3 V22.8 M16.5 21.3 V22.8 M19.3 21.3 V22.8" stroke="#080808" stroke-width="0.9"/><rect x="9.8" y="25.2" width="13.6" height="3.6" rx="1.2" fill="#080808"/><rect x="11.2" y="26.6" width="10.9" height="1.1" fill="#b4b4b4"/></svg></div>
<div class="cell" style="left:270px;top:269px"><svg viewBox="0 0 32 32"><path d="M8 5.6 Q8 5 8.8 5 H11.6 V15.2 L8 13 Z" fill="#080808"/><path d="M9.4 7 H10.8 V13.2 L9.4 12.3 Z" fill="#909090"/><path d="M11.1 3.2 H19.8 V5.2 H21.8 V25.6 H10.9 V9.6 H11.1 Z" fill="#080808"/><rect x="12.6" y="4.4" width="1.5" height="4.5" fill="#8c8c8c"/><rect x="15.2" y="4.4" width="0.8" height="4.5" fill="#8c8c8c"/><rect x="17.1" y="4.4" width="1.5" height="4.5" fill="#8c8c8c"/><rect x="19.5" y="6.4" width="1.2" height="2.5" fill="#8c8c8c"/><rect x="12.1" y="10.4" width="8.8" height="4.5" fill="#fff"/><path d="M13 12.3 H14.6 M15.7 12.3 H17.3 M18.4 12.3 H20" stroke="#080808" stroke-width="0.9"/><rect x="12.1" y="16.9" width="8.8" height="1.8" fill="#fff"/><rect x="12.1" y="20.5" width="8.8" height="4.3" fill="#fff"/><path d="M12.6 21.3 H15 M15.7 21.3 H17.4 M18.2 21.3 H20.4" stroke="#080808" stroke-width="0.9"/><path d="M13.8 21.3 V22.8 M16.5 21.3 V22.8 M19.3 21.3 V22.8" stroke="#080808" stroke-width="0.9"/><rect x="9.8" y="25.2" width="13.6" height="3.6" rx="1.2" fill="#080808"/><rect x="11.2" y="26.6" width="10.9" height="1.1" fill="#b4b4b4"/></svg></div>
<div class="cell" style="left:302px;top:269px"><svg viewBox="0 0 32 32"><path d="M14 2.9 H26 V4.9 H27.9 V17.7 H21.3 V7.8 H12 V4.9 H14 Z" fill="#0c0c0c"/><rect x="13.85" y="3.95" width="1.1" height="0.9" fill="#fff"/><rect x="15.85" y="3.95" width="1.1" height="0.9" fill="#fff"/><rect x="17.85" y="3.95" width="1.1" height="0.9" fill="#fff"/><rect x="19.85" y="3.95" width="1.1" height="0.9" fill="#fff"/><rect x="21.85" y="3.95" width="1.1" height="0.9" fill="#fff"/><rect x="23.85" y="3.95" width="1.1" height="0.9" fill="#fff"/><rect x="11.95" y="5.95" width="1.1" height="0.9" fill="#fff"/><rect x="13.85" y="5.95" width="1.1" height="0.9" fill="#fff"/><rect x="15.85" y="5.95" width="1.1" height="0.9" fill="#fff"/><rect x="17.85" y="5.95" width="1.1" height="0.9" fill="#fff"/><rect x="19.85" y="5.95" width="1.1" height="0.9" fill="#fff"/><path d="M21.4 6.4 H24.5 V14.9" fill="none" stroke="#e8e8e8" stroke-width="0.8"/><rect x="22.00" y="8.00" width="1.0" height="1.0" fill="#fff"/><rect x="22.00" y="10.00" width="1.0" height="1.0" fill="#fff"/><rect x="22.00" y="12.00" width="1.0" height="1.0" fill="#fff"/><rect x="22.00" y="14.00" width="1.0" height="1.0" fill="#fff"/><rect x="22.00" y="16.00" width="1.0" height="1.0" fill="#fff"/><rect x="26.00" y="6.00" width="1.0" height="1.0" fill="#fff"/><rect x="26.00" y="8.00" width="1.0" height="1.0" fill="#fff"/><rect x="26.00" y="10.00" width="1.0" height="1.0" fill="#fff"/><rect x="26.00" y="12.00" width="1.0" height="1.0" fill="#fff"/><rect x="26.00" y="14.00" width="1.0" height="1.0" fill="#fff"/><rect x="26.00" y="16.00" width="1.0" height="1.0" fill="#fff"/><rect x="24.00" y="16.00" width="1.0" height="1.0" fill="#fff"/><rect x="12" y="9.1" width="1.8" height="1.2" fill="#111"/><rect x="10.3" y="10.3" width="5.4" height="3.6" rx="1.2" fill="#111"/><path d="M11.2 13.3 V11.8 Q11.2 11.2 11.8 11.2 H14.2 Q14.8 11.2 14.8 11.8 V13.3 H13.8 V12.3 H12.2 V13.3 Z" fill="#fff"/><circle cx="13" cy="19.3" r="5.25" fill="#fff" stroke="#0c0c0c" stroke-width="1.25"/><path d="M7.8 18.8 L10.3 16.9 L13 19.1 L15.6 17.2 L18.2 18.9 A5.25 5.25 0 0 0 7.8 18.8 Z" fill="#383838"/><circle cx="10.8" cy="20.4" r="1.25" fill="#666"/><path d="M3.6 24.4 L7.6 24.9 V28.8 Z" fill="#f0f0f0" stroke="#111" stroke-width="0.65" stroke-linejoin="round"/><path d="M7.35 24.9 V28.7" stroke="#111" stroke-width="1"/><path d="M9.9 28.7 L12.5 25.9 L15.1 28.7 Z" fill="#f0f0f0" stroke="#111" stroke-width="0.7" stroke-linejoin="round"/><path d="M9.9 28.55 H15.1" stroke="#111" stroke-width="1"/><path d="M17.5 24.9 L21.9 24.2 L17.7 28.8 Z" fill="#f0f0f0" stroke="#111" stroke-width="0.65" stroke-linejoin="round"/><path d="M17.75 24.8 V28.6" stroke="#111" stroke-width="1"/></svg></div>
<div class="cell" style="left:14px;top:301px"><svg viewBox="0 0 32 32"><path d="M14.5 3.4 Q11 4 8.6 6.2 Q5.6 9.2 5.5 13 Q5.8 16.6 8.2 19.6 L12.8 17.6 Q10.4 14.4 10.2 11.4 Q10.2 8 12.2 5.4 Q13.2 4.2 14.5 3.4 Z" fill="#f4f4f4" stroke="#0e0e0e" stroke-width="1.45" stroke-linejoin="round"/><path d="M11.6 5.6 Q9 8.6 9 12 Q9.4 15.4 11.4 18" fill="none" stroke="#cfcfcf" stroke-width="0.9"/><g transform="translate(32.2 0) scale(-1 1)"><path d="M14.5 3.4 Q11 4 8.6 6.2 Q5.6 9.2 5.5 13 Q5.8 16.6 8.2 19.6 L12.8 17.6 Q10.4 14.4 10.2 11.4 Q10.2 8 12.2 5.4 Q13.2 4.2 14.5 3.4 Z" fill="#f4f4f4" stroke="#0e0e0e" stroke-width="1.45" stroke-linejoin="round"/><path d="M11.6 5.6 Q9 8.6 9 12 Q9.4 15.4 11.4 18" fill="none" stroke="#cfcfcf" stroke-width="0.9"/></g><path d="M11.6 22 L14 23.4 M12 22.2 L13.6 24" stroke="#1a1a1a" stroke-width="1.6"/><ellipse cx="12.9" cy="25.7" rx="2.2" ry="2.4" fill="#555" stroke="#222" stroke-width="1"/><g transform="translate(32.2 0) scale(-1 1)"><path d="M11.6 22 L14 23.4 M12 22.2 L13.6 24" stroke="#1a1a1a" stroke-width="1.6"/><ellipse cx="12.9" cy="25.7" rx="2.2" ry="2.4" fill="#555" stroke="#222" stroke-width="1"/></g><path d="M4.9 21.8 L14.4 18.1 Q15.9 18.6 15.7 20.8 L6.4 24.9 Q4.4 24.2 4.9 21.8 Z" fill="#efefef" stroke="#0e0e0e" stroke-width="1.45" stroke-linejoin="round"/><g transform="translate(32.2 0) scale(-1 1)"><path d="M4.9 21.8 L14.4 18.1 Q15.9 18.6 15.7 20.8 L6.4 24.9 Q4.4 24.2 4.9 21.8 Z" fill="#efefef" stroke="#0e0e0e" stroke-width="1.45" stroke-linejoin="round"/></g><path d="M16.1 18 V21.2" stroke="#151515" stroke-width="1.8"/></svg></div>
<div class="cell" style="left:46px;top:301px"><svg viewBox="0 0 32 32"><rect x="14.1" y="9" width="4.5" height="3.6" fill="#a8a8a8"/><rect x="8" y="11.4" width="16.6" height="2.6" fill="#e9e9e9"/><path d="M4.3 3.2 H12.2 V5.9 H13.2 V7 H14.1 V8 H16.2 V9 H14.1 V11.4 H4.3 Z" fill="#0a0a0a"/><rect x="5.6" y="4.5" width="5.3" height="4.6" fill="#fff"/><path d="M6.6 5.3 V6.9 M6.6 7.7 V8.5" stroke="#0a0a0a" stroke-width="0.7"/><rect x="6.9" y="10.3" width="2.8" height="1.3" fill="#e6e6e6"/><rect x="6.3" y="12.6" width="2.2" height="1.2" fill="#777"/><g transform="translate(32.7 0) scale(-1 1)"><path d="M4.3 3.2 H12.2 V5.9 H13.2 V7 H14.1 V8 H16.2 V9 H14.1 V11.4 H4.3 Z" fill="#0a0a0a"/><rect x="5.6" y="4.5" width="5.3" height="4.6" fill="#fff"/><path d="M6.6 5.3 V6.9 M6.6 7.7 V8.5" stroke="#0a0a0a" stroke-width="0.7"/><rect x="6.9" y="10.3" width="2.8" height="1.3" fill="#e6e6e6"/><rect x="6.3" y="12.6" width="2.2" height="1.2" fill="#777"/></g><path d="M6.5 14.2 H25.5 L23.5 23.6 H8.7 Z" fill="#fff" stroke="#0a0a0a" stroke-width="1.5" stroke-linejoin="round"/><rect x="6.2" y="13.7" width="19.6" height="1.6" fill="#0a0a0a"/><path d="M10.9 20.9 H12 M13.8 20.9 H14.9 M16.8 20.9 H18.4 M20 20.9 H21.3" stroke="#0a0a0a" stroke-width="1.8"/><rect x="8.4" y="23" width="15.4" height="1.5" fill="#0a0a0a"/><rect x="7.6" y="24.4" width="17" height="1.1" fill="#6a6a6a"/><rect x="5.7" y="25.8" width="21.4" height="2.8" fill="#fff" stroke="#0a0a0a" stroke-width="1.4" stroke-linejoin="round"/></svg></div>
<div class="cell" style="left:78px;top:301px"><svg viewBox="0 0 32 32"><path d="M14.5 3.4 Q11 4 8.6 6.2 Q5.6 9.2 5.5 13 Q5.8 16.6 8.2 19.6 L12.8 17.6 Q10.4 14.4 10.2 11.4 Q10.2 8 12.2 5.4 Q13.2 4.2 14.5 3.4 Z" fill="#f4f4f4" stroke="#0e0e0e" stroke-width="1.45" stroke-linejoin="round"/><path d="M11.6 5.6 Q9 8.6 9 12 Q9.4 15.4 11.4 18" fill="none" stroke="#cfcfcf" stroke-width="0.9"/><g transform="translate(32.2 0) scale(-1 1)"><path d="M14.5 3.4 Q11 4 8.6 6.2 Q5.6 9.2 5.5 13 Q5.8 16.6 8.2 19.6 L12.8 17.6 Q10.4 14.4 10.2 11.4 Q10.2 8 12.2 5.4 Q13.2 4.2 14.5 3.4 Z" fill="#f4f4f4" stroke="#0e0e0e" stroke-width="1.45" stroke-linejoin="round"/><path d="M11.6 5.6 Q9 8.6 9 12 Q9.4 15.4 11.4 18" fill="none" stroke="#cfcfcf" stroke-width="0.9"/></g><path d="M11.6 22 L14 23.4 M12 22.2 L13.6 24" stroke="#1a1a1a" stroke-width="1.6"/><ellipse cx="12.9" cy="25.7" rx="2.2" ry="2.4" fill="#555" stroke="#222" stroke-width="1"/><g transform="translate(32.2 0) scale(-1 1)"><path d="M11.6 22 L14 23.4 M12 22.2 L13.6 24" stroke="#1a1a1a" stroke-width="1.6"/><ellipse cx="12.9" cy="25.7" rx="2.2" ry="2.4" fill="#555" stroke="#222" stroke-width="1"/></g><path d="M4.9 21.8 L14.4 18.1 Q15.9 18.6 15.7 20.8 L6.4 24.9 Q4.4 24.2 4.9 21.8 Z" fill="#efefef" stroke="#0e0e0e" stroke-width="1.45" stroke-linejoin="round"/><g transform="translate(32.2 0) scale(-1 1)"><path d="M4.9 21.8 L14.4 18.1 Q15.9 18.6 15.7 20.8 L6.4 24.9 Q4.4 24.2 4.9 21.8 Z" fill="#efefef" stroke="#0e0e0e" stroke-width="1.45" stroke-linejoin="round"/></g><path d="M16.1 18 V21.2" stroke="#151515" stroke-width="1.8"/></svg></div>
<div class="cell" style="left:110px;top:301px"><svg viewBox="0 0 32 32"><rect x="14.1" y="9" width="4.5" height="3.6" fill="#a8a8a8"/><rect x="8" y="11.4" width="16.6" height="2.6" fill="#e9e9e9"/><path d="M4.3 3.2 H12.2 V5.9 H13.2 V7 H14.1 V8 H16.2 V9 H14.1 V11.4 H4.3 Z" fill="#0a0a0a"/><rect x="5.6" y="4.5" width="5.3" height="4.6" fill="#fff"/><path d="M6.6 5.3 V6.9 M6.6 7.7 V8.5" stroke="#0a0a0a" stroke-width="0.7"/><rect x="6.9" y="10.3" width="2.8" height="1.3" fill="#e6e6e6"/><rect x="6.3" y="12.6" width="2.2" height="1.2" fill="#777"/><g transform="translate(32.7 0) scale(-1 1)"><path d="M4.3 3.2 H12.2 V5.9 H13.2 V7 H14.1 V8 H16.2 V9 H14.1 V11.4 H4.3 Z" fill="#0a0a0a"/><rect x="5.6" y="4.5" width="5.3" height="4.6" fill="#fff"/><path d="M6.6 5.3 V6.9 M6.6 7.7 V8.5" stroke="#0a0a0a" stroke-width="0.7"/><rect x="6.9" y="10.3" width="2.8" height="1.3" fill="#e6e6e6"/><rect x="6.3" y="12.6" width="2.2" height="1.2" fill="#777"/></g><path d="M6.5 14.2 H25.5 L23.5 23.6 H8.7 Z" fill="#fff" stroke="#0a0a0a" stroke-width="1.5" stroke-linejoin="round"/><rect x="6.2" y="13.7" width="19.6" height="1.6" fill="#0a0a0a"/><path d="M10.9 20.9 H12 M13.8 20.9 H14.9 M16.8 20.9 H18.4 M20 20.9 H21.3" stroke="#0a0a0a" stroke-width="1.8"/><rect x="8.4" y="23" width="15.4" height="1.5" fill="#0a0a0a"/><rect x="7.6" y="24.4" width="17" height="1.1" fill="#6a6a6a"/><rect x="5.7" y="25.8" width="21.4" height="2.8" fill="#fff" stroke="#0a0a0a" stroke-width="1.4" stroke-linejoin="round"/></svg></div>
<div class="cell" style="left:142px;top:301px"><svg viewBox="0 0 32 32"><rect x="14.1" y="9" width="4.5" height="3.6" fill="#a8a8a8"/><rect x="8" y="11.4" width="16.6" height="2.6" fill="#e9e9e9"/><path d="M4.3 3.2 H12.2 V5.9 H13.2 V7 H14.1 V8 H16.2 V9 H14.1 V11.4 H4.3 Z" fill="#0a0a0a"/><rect x="5.6" y="4.5" width="5.3" height="4.6" fill="#fff"/><path d="M6.6 5.3 V6.9 M6.6 7.7 V8.5" stroke="#0a0a0a" stroke-width="0.7"/><rect x="6.9" y="10.3" width="2.8" height="1.3" fill="#e6e6e6"/><rect x="6.3" y="12.6" width="2.2" height="1.2" fill="#777"/><g transform="translate(32.7 0) scale(-1 1)"><path d="M4.3 3.2 H12.2 V5.9 H13.2 V7 H14.1 V8 H16.2 V9 H14.1 V11.4 H4.3 Z" fill="#0a0a0a"/><rect x="5.6" y="4.5" width="5.3" height="4.6" fill="#fff"/><path d="M6.6 5.3 V6.9 M6.6 7.7 V8.5" stroke="#0a0a0a" stroke-width="0.7"/><rect x="6.9" y="10.3" width="2.8" height="1.3" fill="#e6e6e6"/><rect x="6.3" y="12.6" width="2.2" height="1.2" fill="#777"/></g><path d="M6.5 14.2 H25.5 L23.5 23.6 H8.7 Z" fill="#fff" stroke="#0a0a0a" stroke-width="1.5" stroke-linejoin="round"/><rect x="6.2" y="13.7" width="19.6" height="1.6" fill="#0a0a0a"/><path d="M10.9 20.9 H12 M13.8 20.9 H14.9 M16.8 20.9 H18.4 M20 20.9 H21.3" stroke="#0a0a0a" stroke-width="1.8"/><rect x="8.4" y="23" width="15.4" height="1.5" fill="#0a0a0a"/><rect x="7.6" y="24.4" width="17" height="1.1" fill="#6a6a6a"/><rect x="5.7" y="25.8" width="21.4" height="2.8" fill="#fff" stroke="#0a0a0a" stroke-width="1.4" stroke-linejoin="round"/></svg></div>
<div class="cell" style="left:174px;top:301px"><svg viewBox="0 0 32 32"><rect x="14.1" y="9" width="4.5" height="3.6" fill="#a8a8a8"/><rect x="8" y="11.4" width="16.6" height="2.6" fill="#e9e9e9"/><path d="M4.3 3.2 H12.2 V5.9 H13.2 V7 H14.1 V8 H16.2 V9 H14.1 V11.4 H4.3 Z" fill="#0a0a0a"/><rect x="5.6" y="4.5" width="5.3" height="4.6" fill="#fff"/><path d="M6.6 5.3 V6.9 M6.6 7.7 V8.5" stroke="#0a0a0a" stroke-width="0.7"/><rect x="6.9" y="10.3" width="2.8" height="1.3" fill="#e6e6e6"/><rect x="6.3" y="12.6" width="2.2" height="1.2" fill="#777"/><g transform="translate(32.7 0) scale(-1 1)"><path d="M4.3 3.2 H12.2 V5.9 H13.2 V7 H14.1 V8 H16.2 V9 H14.1 V11.4 H4.3 Z" fill="#0a0a0a"/><rect x="5.6" y="4.5" width="5.3" height="4.6" fill="#fff"/><path d="M6.6 5.3 V6.9 M6.6 7.7 V8.5" stroke="#0a0a0a" stroke-width="0.7"/><rect x="6.9" y="10.3" width="2.8" height="1.3" fill="#e6e6e6"/><rect x="6.3" y="12.6" width="2.2" height="1.2" fill="#777"/></g><path d="M6.5 14.2 H25.5 L23.5 23.6 H8.7 Z" fill="#fff" stroke="#0a0a0a" stroke-width="1.5" stroke-linejoin="round"/><rect x="6.2" y="13.7" width="19.6" height="1.6" fill="#0a0a0a"/><path d="M10.9 20.9 H12 M13.8 20.9 H14.9 M16.8 20.9 H18.4 M20 20.9 H21.3" stroke="#0a0a0a" stroke-width="1.8"/><rect x="8.4" y="23" width="15.4" height="1.5" fill="#0a0a0a"/><rect x="7.6" y="24.4" width="17" height="1.1" fill="#6a6a6a"/><rect x="5.7" y="25.8" width="21.4" height="2.8" fill="#fff" stroke="#0a0a0a" stroke-width="1.4" stroke-linejoin="round"/></svg></div>
<div class="cell" style="left:206px;top:301px"><svg viewBox="0 0 32 32"><path d="M14.5 3.4 Q11 4 8.6 6.2 Q5.6 9.2 5.5 13 Q5.8 16.6 8.2 19.6 L12.8 17.6 Q10.4 14.4 10.2 11.4 Q10.2 8 12.2 5.4 Q13.2 4.2 14.5 3.4 Z" fill="#f4f4f4" stroke="#0e0e0e" stroke-width="1.45" stroke-linejoin="round"/><path d="M11.6 5.6 Q9 8.6 9 12 Q9.4 15.4 11.4 18" fill="none" stroke="#cfcfcf" stroke-width="0.9"/><g transform="translate(32.2 0) scale(-1 1)"><path d="M14.5 3.4 Q11 4 8.6 6.2 Q5.6 9.2 5.5 13 Q5.8 16.6 8.2 19.6 L12.8 17.6 Q10.4 14.4 10.2 11.4 Q10.2 8 12.2 5.4 Q13.2 4.2 14.5 3.4 Z" fill="#f4f4f4" stroke="#0e0e0e" stroke-width="1.45" stroke-linejoin="round"/><path d="M11.6 5.6 Q9 8.6 9 12 Q9.4 15.4 11.4 18" fill="none" stroke="#cfcfcf" stroke-width="0.9"/></g><path d="M11.6 22 L14 23.4 M12 22.2 L13.6 24" stroke="#1a1a1a" stroke-width="1.6"/><ellipse cx="12.9" cy="25.7" rx="2.2" ry="2.4" fill="#555" stroke="#222" stroke-width="1"/><g transform="translate(32.2 0) scale(-1 1)"><path d="M11.6 22 L14 23.4 M12 22.2 L13.6 24" stroke="#1a1a1a" stroke-width="1.6"/><ellipse cx="12.9" cy="25.7" rx="2.2" ry="2.4" fill="#555" stroke="#222" stroke-width="1"/></g><path d="M4.9 21.8 L14.4 18.1 Q15.9 18.6 15.7 20.8 L6.4 24.9 Q4.4 24.2 4.9 21.8 Z" fill="#efefef" stroke="#0e0e0e" stroke-width="1.45" stroke-linejoin="round"/><g transform="translate(32.2 0) scale(-1 1)"><path d="M4.9 21.8 L14.4 18.1 Q15.9 18.6 15.7 20.8 L6.4 24.9 Q4.4 24.2 4.9 21.8 Z" fill="#efefef" stroke="#0e0e0e" stroke-width="1.45" stroke-linejoin="round"/></g><path d="M16.1 18 V21.2" stroke="#151515" stroke-width="1.8"/></svg></div>
<div class="cell" style="left:238px;top:301px"><svg viewBox="0 0 32 32"><rect x="14.1" y="9" width="4.5" height="3.6" fill="#a8a8a8"/><rect x="8" y="11.4" width="16.6" height="2.6" fill="#e9e9e9"/><path d="M4.3 3.2 H12.2 V5.9 H13.2 V7 H14.1 V8 H16.2 V9 H14.1 V11.4 H4.3 Z" fill="#0a0a0a"/><rect x="5.6" y="4.5" width="5.3" height="4.6" fill="#fff"/><path d="M6.6 5.3 V6.9 M6.6 7.7 V8.5" stroke="#0a0a0a" stroke-width="0.7"/><rect x="6.9" y="10.3" width="2.8" height="1.3" fill="#e6e6e6"/><rect x="6.3" y="12.6" width="2.2" height="1.2" fill="#777"/><g transform="translate(32.7 0) scale(-1 1)"><path d="M4.3 3.2 H12.2 V5.9 H13.2 V7 H14.1 V8 H16.2 V9 H14.1 V11.4 H4.3 Z" fill="#0a0a0a"/><rect x="5.6" y="4.5" width="5.3" height="4.6" fill="#fff"/><path d="M6.6 5.3 V6.9 M6.6 7.7 V8.5" stroke="#0a0a0a" stroke-width="0.7"/><rect x="6.9" y="10.3" width="2.8" height="1.3" fill="#e6e6e6"/><rect x="6.3" y="12.6" width="2.2" height="1.2" fill="#777"/></g><path d="M6.5 14.2 H25.5 L23.5 23.6 H8.7 Z" fill="#fff" stroke="#0a0a0a" stroke-width="1.5" stroke-linejoin="round"/><rect x="6.2" y="13.7" width="19.6" height="1.6" fill="#0a0a0a"/><path d="M10.9 20.9 H12 M13.8 20.9 H14.9 M16.8 20.9 H18.4 M20 20.9 H21.3" stroke="#0a0a0a" stroke-width="1.8"/><rect x="8.4" y="23" width="15.4" height="1.5" fill="#0a0a0a"/><rect x="7.6" y="24.4" width="17" height="1.1" fill="#6a6a6a"/><rect x="5.7" y="25.8" width="21.4" height="2.8" fill="#fff" stroke="#0a0a0a" stroke-width="1.4" stroke-linejoin="round"/></svg></div>
<div class="cell" style="left:270px;top:301px"><svg viewBox="0 0 32 32"><path d="M7.5 7.6 L10 5.3 H11.9 V20 H7.5 Z" fill="#f6f6f6" stroke="#141414" stroke-width="1.2" stroke-linejoin="round"/><path d="M9 8.2 V19.6" stroke="#3a3a3a" stroke-width="0.7"/><rect x="7.5" y="22.6" width="4.4" height="4.7" fill="#505050" stroke="#1c1c1c" stroke-width="0.9"/><path d="M8 24 H11.4 M8 25.6 H11.4" stroke="#9a9a9a" stroke-width="0.6"/><rect x="4.6" y="19.9" width="9.4" height="2.9" rx="1.4" fill="#f0f0f0" stroke="#141414" stroke-width="1.2"/><circle cx="22" cy="17.3" r="5.9" fill="#f4f4f4" stroke="#141414" stroke-width="1.4"/><circle cx="22" cy="17.3" r="4.2" fill="none" stroke="#3a3a3a" stroke-width="0.7" stroke-dasharray="2.3 1.0" stroke-dashoffset="1.1"/><rect x="19.7" y="15.1" width="4.6" height="4.5" rx="0.9" fill="#858585" stroke="#4a4a4a" stroke-width="0.9"/></svg></div>
<div class="cell" style="left:302px;top:301px"><svg viewBox="0 0 32 32"><rect x="14.1" y="9" width="4.5" height="3.6" fill="#a8a8a8"/><rect x="8" y="11.4" width="16.6" height="2.6" fill="#e9e9e9"/><path d="M4.3 3.2 H12.2 V5.9 H13.2 V7 H14.1 V8 H16.2 V9 H14.1 V11.4 H4.3 Z" fill="#0a0a0a"/><rect x="5.6" y="4.5" width="5.3" height="4.6" fill="#fff"/><path d="M6.6 5.3 V6.9 M6.6 7.7 V8.5" stroke="#0a0a0a" stroke-width="0.7"/><rect x="6.9" y="10.3" width="2.8" height="1.3" fill="#e6e6e6"/><rect x="6.3" y="12.6" width="2.2" height="1.2" fill="#777"/><g transform="translate(32.7 0) scale(-1 1)"><path d="M4.3 3.2 H12.2 V5.9 H13.2 V7 H14.1 V8 H16.2 V9 H14.1 V11.4 H4.3 Z" fill="#0a0a0a"/><rect x="5.6" y="4.5" width="5.3" height="4.6" fill="#fff"/><path d="M6.6 5.3 V6.9 M6.6 7.7 V8.5" stroke="#0a0a0a" stroke-width="0.7"/><rect x="6.9" y="10.3" width="2.8" height="1.3" fill="#e6e6e6"/><rect x="6.3" y="12.6" width="2.2" height="1.2" fill="#777"/></g><path d="M6.5 14.2 H25.5 L23.5 23.6 H8.7 Z" fill="#fff" stroke="#0a0a0a" stroke-width="1.5" stroke-linejoin="round"/><rect x="6.2" y="13.7" width="19.6" height="1.6" fill="#0a0a0a"/><path d="M10.9 20.9 H12 M13.8 20.9 H14.9 M16.8 20.9 H18.4 M20 20.9 H21.3" stroke="#0a0a0a" stroke-width="1.8"/><rect x="8.4" y="23" width="15.4" height="1.5" fill="#0a0a0a"/><rect x="7.6" y="24.4" width="17" height="1.1" fill="#6a6a6a"/><rect x="5.7" y="25.8" width="21.4" height="2.8" fill="#fff" stroke="#0a0a0a" stroke-width="1.4" stroke-linejoin="round"/></svg></div>
<div class="cell" style="left:14px;top:333px"><svg viewBox="0 0 32 32"><rect x="14.1" y="9" width="4.5" height="3.6" fill="#a8a8a8"/><rect x="8" y="11.4" width="16.6" height="2.6" fill="#e9e9e9"/><path d="M4.3 3.2 H12.2 V5.9 H13.2 V7 H14.1 V8 H16.2 V9 H14.1 V11.4 H4.3 Z" fill="#0a0a0a"/><rect x="5.6" y="4.5" width="5.3" height="4.6" fill="#fff"/><path d="M6.6 5.3 V6.9 M6.6 7.7 V8.5" stroke="#0a0a0a" stroke-width="0.7"/><rect x="6.9" y="10.3" width="2.8" height="1.3" fill="#e6e6e6"/><rect x="6.3" y="12.6" width="2.2" height="1.2" fill="#777"/><g transform="translate(32.7 0) scale(-1 1)"><path d="M4.3 3.2 H12.2 V5.9 H13.2 V7 H14.1 V8 H16.2 V9 H14.1 V11.4 H4.3 Z" fill="#0a0a0a"/><rect x="5.6" y="4.5" width="5.3" height="4.6" fill="#fff"/><path d="M6.6 5.3 V6.9 M6.6 7.7 V8.5" stroke="#0a0a0a" stroke-width="0.7"/><rect x="6.9" y="10.3" width="2.8" height="1.3" fill="#e6e6e6"/><rect x="6.3" y="12.6" width="2.2" height="1.2" fill="#777"/></g><path d="M6.5 14.2 H25.5 L23.5 23.6 H8.7 Z" fill="#fff" stroke="#0a0a0a" stroke-width="1.5" stroke-linejoin="round"/><rect x="6.2" y="13.7" width="19.6" height="1.6" fill="#0a0a0a"/><path d="M10.9 20.9 H12 M13.8 20.9 H14.9 M16.8 20.9 H18.4 M20 20.9 H21.3" stroke="#0a0a0a" stroke-width="1.8"/><rect x="8.4" y="23" width="15.4" height="1.5" fill="#0a0a0a"/><rect x="7.6" y="24.4" width="17" height="1.1" fill="#6a6a6a"/><rect x="5.7" y="25.8" width="21.4" height="2.8" fill="#fff" stroke="#0a0a0a" stroke-width="1.4" stroke-linejoin="round"/></svg></div>
<div class="cell" style="left:46px;top:333px"><svg viewBox="0 0 32 32"><rect x="14.1" y="9" width="4.5" height="3.6" fill="#a8a8a8"/><rect x="8" y="11.4" width="16.6" height="2.6" fill="#e9e9e9"/><path d="M4.3 3.2 H12.2 V5.9 H13.2 V7 H14.1 V8 H16.2 V9 H14.1 V11.4 H4.3 Z" fill="#0a0a0a"/><rect x="5.6" y="4.5" width="5.3" height="4.6" fill="#fff"/><path d="M6.6 5.3 V6.9 M6.6 7.7 V8.5" stroke="#0a0a0a" stroke-width="0.7"/><rect x="6.9" y="10.3" width="2.8" height="1.3" fill="#e6e6e6"/><rect x="6.3" y="12.6" width="2.2" height="1.2" fill="#777"/><g transform="translate(32.7 0) scale(-1 1)"><path d="M4.3 3.2 H12.2 V5.9 H13.2 V7 H14.1 V8 H16.2 V9 H14.1 V11.4 H4.3 Z" fill="#0a0a0a"/><rect x="5.6" y="4.5" width="5.3" height="4.6" fill="#fff"/><path d="M6.6 5.3 V6.9 M6.6 7.7 V8.5" stroke="#0a0a0a" stroke-width="0.7"/><rect x="6.9" y="10.3" width="2.8" height="1.3" fill="#e6e6e6"/><rect x="6.3" y="12.6" width="2.2" height="1.2" fill="#777"/></g><path d="M6.5 14.2 H25.5 L23.5 23.6 H8.7 Z" fill="#fff" stroke="#0a0a0a" stroke-width="1.5" stroke-linejoin="round"/><rect x="6.2" y="13.7" width="19.6" height="1.6" fill="#0a0a0a"/><path d="M10.9 20.9 H12 M13.8 20.9 H14.9 M16.8 20.9 H18.4 M20 20.9 H21.3" stroke="#0a0a0a" stroke-width="1.8"/><rect x="8.4" y="23" width="15.4" height="1.5" fill="#0a0a0a"/><rect x="7.6" y="24.4" width="17" height="1.1" fill="#6a6a6a"/><rect x="5.7" y="25.8" width="21.4" height="2.8" fill="#fff" stroke="#0a0a0a" stroke-width="1.4" stroke-linejoin="round"/></svg></div>
<div class="cell" style="left:78px;top:333px"><svg viewBox="0 0 32 32"><g fill="none" stroke-linecap="round" stroke-linejoin="round"><path d="M7.6 13.6 Q4.6 14 4.8 16.4 Q5.4 18.6 8 17.8 L8.6 11 L12 7.4 H20.4 L23.6 11 L24.4 17.8 Q27 18.6 27.4 16.4 Q27.6 14 24.6 13.6" stroke="#363636" stroke-width="3"/><path d="M7.6 13.6 Q4.6 14 4.8 16.4 Q5.4 18.6 8 17.8 L8.6 11 L12 7.4 H20.4 L23.6 11 L24.4 17.8 Q27 18.6 27.4 16.4 Q27.6 14 24.6 13.6" stroke="#e6e6e6" stroke-width="1"/></g><rect x="14.2" y="3.8" width="3.4" height="3" rx="0.8" fill="#ddd" stroke="#363636" stroke-width="1"/><rect x="17.9" y="20" width="3.8" height="3.4" fill="#ccc" stroke="#363636" stroke-width="1"/><path d="M12.4 9.4 H19.2 L17.5 21 Q17.4 22.8 18.4 24.4 Q18.8 27.6 15.9 28.2 Q12.9 27.6 13.4 24.4 Q14.4 22.8 14.3 21 Z" fill="#eee" stroke="#363636" stroke-width="1.1" stroke-linejoin="round"/><path d="M15.9 18 V26" stroke="#aaa" stroke-width="1"/></svg></div>
<div class="cell" style="left:110px;top:333px"><svg viewBox="0 0 32 32"><rect x="14.1" y="9" width="4.5" height="3.6" fill="#a8a8a8"/><rect x="8" y="11.4" width="16.6" height="2.6" fill="#e9e9e9"/><path d="M4.3 3.2 H12.2 V5.9 H13.2 V7 H14.1 V8 H16.2 V9 H14.1 V11.4 H4.3 Z" fill="#0a0a0a"/><rect x="5.6" y="4.5" width="5.3" height="4.6" fill="#fff"/><path d="M6.6 5.3 V6.9 M6.6 7.7 V8.5" stroke="#0a0a0a" stroke-width="0.7"/><rect x="6.9" y="10.3" width="2.8" height="1.3" fill="#e6e6e6"/><rect x="6.3" y="12.6" width="2.2" height="1.2" fill="#777"/><g transform="translate(32.7 0) scale(-1 1)"><path d="M4.3 3.2 H12.2 V5.9 H13.2 V7 H14.1 V8 H16.2 V9 H14.1 V11.4 H4.3 Z" fill="#0a0a0a"/><rect x="5.6" y="4.5" width="5.3" height="4.6" fill="#fff"/><path d="M6.6 5.3 V6.9 M6.6 7.7 V8.5" stroke="#0a0a0a" stroke-width="0.7"/><rect x="6.9" y="10.3" width="2.8" height="1.3" fill="#e6e6e6"/><rect x="6.3" y="12.6" width="2.2" height="1.2" fill="#777"/></g><path d="M6.5 14.2 H25.5 L23.5 23.6 H8.7 Z" fill="#fff" stroke="#0a0a0a" stroke-width="1.5" stroke-linejoin="round"/><rect x="6.2" y="13.7" width="19.6" height="1.6" fill="#0a0a0a"/><path d="M10.9 20.9 H12 M13.8 20.9 H14.9 M16.8 20.9 H18.4 M20 20.9 H21.3" stroke="#0a0a0a" stroke-width="1.8"/><rect x="8.4" y="23" width="15.4" height="1.5" fill="#0a0a0a"/><rect x="7.6" y="24.4" width="17" height="1.1" fill="#6a6a6a"/><rect x="5.7" y="25.8" width="21.4" height="2.8" fill="#fff" stroke="#0a0a0a" stroke-width="1.4" stroke-linejoin="round"/></svg></div>
<div class="cell" style="left:142px;top:333px"><svg viewBox="0 0 32 32"><rect x="14.1" y="9" width="4.5" height="3.6" fill="#a8a8a8"/><rect x="8" y="11.4" width="16.6" height="2.6" fill="#e9e9e9"/><path d="M4.3 3.2 H12.2 V5.9 H13.2 V7 H14.1 V8 H16.2 V9 H14.1 V11.4 H4.3 Z" fill="#0a0a0a"/><rect x="5.6" y="4.5" width="5.3" height="4.6" fill="#fff"/><path d="M6.6 5.3 V6.9 M6.6 7.7 V8.5" stroke="#0a0a0a" stroke-width="0.7"/><rect x="6.9" y="10.3" width="2.8" height="1.3" fill="#e6e6e6"/><rect x="6.3" y="12.6" width="2.2" height="1.2" fill="#777"/><g transform="translate(32.7 0) scale(-1 1)"><path d="M4.3 3.2 H12.2 V5.9 H13.2 V7 H14.1 V8 H16.2 V9 H14.1 V11.4 H4.3 Z" fill="#0a0a0a"/><rect x="5.6" y="4.5" width="5.3" height="4.6" fill="#fff"/><path d="M6.6 5.3 V6.9 M6.6 7.7 V8.5" stroke="#0a0a0a" stroke-width="0.7"/><rect x="6.9" y="10.3" width="2.8" height="1.3" fill="#e6e6e6"/><rect x="6.3" y="12.6" width="2.2" height="1.2" fill="#777"/></g><path d="M6.5 14.2 H25.5 L23.5 23.6 H8.7 Z" fill="#fff" stroke="#0a0a0a" stroke-width="1.5" stroke-linejoin="round"/><rect x="6.2" y="13.7" width="19.6" height="1.6" fill="#0a0a0a"/><path d="M10.9 20.9 H12 M13.8 20.9 H14.9 M16.8 20.9 H18.4 M20 20.9 H21.3" stroke="#0a0a0a" stroke-width="1.8"/><rect x="8.4" y="23" width="15.4" height="1.5" fill="#0a0a0a"/><rect x="7.6" y="24.4" width="17" height="1.1" fill="#6a6a6a"/><rect x="5.7" y="25.8" width="21.4" height="2.8" fill="#fff" stroke="#0a0a0a" stroke-width="1.4" stroke-linejoin="round"/></svg></div>
<div class="cell" style="left:174px;top:333px"><svg viewBox="0 0 32 32"><path d="M8 5.6 Q8 5 8.8 5 H11.6 V15.2 L8 13 Z" fill="#080808"/><path d="M9.4 7 H10.8 V13.2 L9.4 12.3 Z" fill="#909090"/><path d="M11.1 3.2 H19.8 V5.2 H21.8 V25.6 H10.9 V9.6 H11.1 Z" fill="#080808"/><rect x="12.6" y="4.4" width="1.5" height="4.5" fill="#8c8c8c"/><rect x="15.2" y="4.4" width="0.8" height="4.5" fill="#8c8c8c"/><rect x="17.1" y="4.4" width="1.5" height="4.5" fill="#8c8c8c"/><rect x="19.5" y="6.4" width="1.2" height="2.5" fill="#8c8c8c"/><rect x="12.1" y="10.4" width="8.8" height="4.5" fill="#fff"/><path d="M13 12.3 H14.6 M15.7 12.3 H17.3 M18.4 12.3 H20" stroke="#080808" stroke-width="0.9"/><rect x="12.1" y="16.9" width="8.8" height="1.8" fill="#fff"/><rect x="12.1" y="20.5" width="8.8" height="4.3" fill="#fff"/><path d="M12.6 21.3 H15 M15.7 21.3 H17.4 M18.2 21.3 H20.4" stroke="#080808" stroke-width="0.9"/><path d="M13.8 21.3 V22.8 M16.5 21.3 V22.8 M19.3 21.3 V22.8" stroke="#080808" stroke-width="0.9"/><rect x="9.8" y="25.2" width="13.6" height="3.6" rx="1.2" fill="#080808"/><rect x="11.2" y="26.6" width="10.9" height="1.1" fill="#b4b4b4"/></svg></div>
<div class="cell" style="left:206px;top:333px"><svg viewBox="0 0 32 32"><path d="M8 5.6 Q8 5 8.8 5 H11.6 V15.2 L8 13 Z" fill="#080808"/><path d="M9.4 7 H10.8 V13.2 L9.4 12.3 Z" fill="#909090"/><path d="M11.1 3.2 H19.8 V5.2 H21.8 V25.6 H10.9 V9.6 H11.1 Z" fill="#080808"/><rect x="12.6" y="4.4" width="1.5" height="4.5" fill="#8c8c8c"/><rect x="15.2" y="4.4" width="0.8" height="4.5" fill="#8c8c8c"/><rect x="17.1" y="4.4" width="1.5" height="4.5" fill="#8c8c8c"/><rect x="19.5" y="6.4" width="1.2" height="2.5" fill="#8c8c8c"/><rect x="12.1" y="10.4" width="8.8" height="4.5" fill="#fff"/><path d="M13 12.3 H14.6 M15.7 12.3 H17.3 M18.4 12.3 H20" stroke="#080808" stroke-width="0.9"/><rect x="12.1" y="16.9" width="8.8" height="1.8" fill="#fff"/><rect x="12.1" y="20.5" width="8.8" height="4.3" fill="#fff"/><path d="M12.6 21.3 H15 M15.7 21.3 H17.4 M18.2 21.3 H20.4" stroke="#080808" stroke-width="0.9"/><path d="M13.8 21.3 V22.8 M16.5 21.3 V22.8 M19.3 21.3 V22.8" stroke="#080808" stroke-width="0.9"/><rect x="9.8" y="25.2" width="13.6" height="3.6" rx="1.2" fill="#080808"/><rect x="11.2" y="26.6" width="10.9" height="1.1" fill="#b4b4b4"/></svg></div>
<div class="cell" style="left:238px;top:333px"><svg viewBox="0 0 32 32"><path d="M8 5.6 Q8 5 8.8 5 H11.6 V15.2 L8 13 Z" fill="#080808"/><path d="M9.4 7 H10.8 V13.2 L9.4 12.3 Z" fill="#909090"/><path d="M11.1 3.2 H19.8 V5.2 H21.8 V25.6 H10.9 V9.6 H11.1 Z" fill="#080808"/><rect x="12.6" y="4.4" width="1.5" height="4.5" fill="#8c8c8c"/><rect x="15.2" y="4.4" width="0.8" height="4.5" fill="#8c8c8c"/><rect x="17.1" y="4.4" width="1.5" height="4.5" fill="#8c8c8c"/><rect x="19.5" y="6.4" width="1.2" height="2.5" fill="#8c8c8c"/><rect x="12.1" y="10.4" width="8.8" height="4.5" fill="#fff"/><path d="M13 12.3 H14.6 M15.7 12.3 H17.3 M18.4 12.3 H20" stroke="#080808" stroke-width="0.9"/><rect x="12.1" y="16.9" width="8.8" height="1.8" fill="#fff"/><rect x="12.1" y="20.5" width="8.8" height="4.3" fill="#fff"/><path d="M12.6 21.3 H15 M15.7 21.3 H17.4 M18.2 21.3 H20.4" stroke="#080808" stroke-width="0.9"/><path d="M13.8 21.3 V22.8 M16.5 21.3 V22.8 M19.3 21.3 V22.8" stroke="#080808" stroke-width="0.9"/><rect x="9.8" y="25.2" width="13.6" height="3.6" rx="1.2" fill="#080808"/><rect x="11.2" y="26.6" width="10.9" height="1.1" fill="#b4b4b4"/></svg></div>
<div class="cell" style="left:270px;top:333px"><svg viewBox="0 0 32 32"><path d="M8 5.6 Q8 5 8.8 5 H11.6 V15.2 L8 13 Z" fill="#080808"/><path d="M9.4 7 H10.8 V13.2 L9.4 12.3 Z" fill="#909090"/><path d="M11.1 3.2 H19.8 V5.2 H21.8 V25.6 H10.9 V9.6 H11.1 Z" fill="#080808"/><rect x="12.6" y="4.4" width="1.5" height="4.5" fill="#8c8c8c"/><rect x="15.2" y="4.4" width="0.8" height="4.5" fill="#8c8c8c"/><rect x="17.1" y="4.4" width="1.5" height="4.5" fill="#8c8c8c"/><rect x="19.5" y="6.4" width="1.2" height="2.5" fill="#8c8c8c"/><rect x="12.1" y="10.4" width="8.8" height="4.5" fill="#fff"/><path d="M13 12.3 H14.6 M15.7 12.3 H17.3 M18.4 12.3 H20" stroke="#080808" stroke-width="0.9"/><rect x="12.1" y="16.9" width="8.8" height="1.8" fill="#fff"/><rect x="12.1" y="20.5" width="8.8" height="4.3" fill="#fff"/><path d="M12.6 21.3 H15 M15.7 21.3 H17.4 M18.2 21.3 H20.4" stroke="#080808" stroke-width="0.9"/><path d="M13.8 21.3 V22.8 M16.5 21.3 V22.8 M19.3 21.3 V22.8" stroke="#080808" stroke-width="0.9"/><rect x="9.8" y="25.2" width="13.6" height="3.6" rx="1.2" fill="#080808"/><rect x="11.2" y="26.6" width="10.9" height="1.1" fill="#b4b4b4"/></svg></div>
<div class="cell" style="left:302px;top:333px"><svg viewBox="0 0 32 32"><path d="M8 5.6 Q8 5 8.8 5 H11.6 V15.2 L8 13 Z" fill="#080808"/><path d="M9.4 7 H10.8 V13.2 L9.4 12.3 Z" fill="#909090"/><path d="M11.1 3.2 H19.8 V5.2 H21.8 V25.6 H10.9 V9.6 H11.1 Z" fill="#080808"/><rect x="12.6" y="4.4" width="1.5" height="4.5" fill="#8c8c8c"/><rect x="15.2" y="4.4" width="0.8" height="4.5" fill="#8c8c8c"/><rect x="17.1" y="4.4" width="1.5" height="4.5" fill="#8c8c8c"/><rect x="19.5" y="6.4" width="1.2" height="2.5" fill="#8c8c8c"/><rect x="12.1" y="10.4" width="8.8" height="4.5" fill="#fff"/><path d="M13 12.3 H14.6 M15.7 12.3 H17.3 M18.4 12.3 H20" stroke="#080808" stroke-width="0.9"/><rect x="12.1" y="16.9" width="8.8" height="1.8" fill="#fff"/><rect x="12.1" y="20.5" width="8.8" height="4.3" fill="#fff"/><path d="M12.6 21.3 H15 M15.7 21.3 H17.4 M18.2 21.3 H20.4" stroke="#080808" stroke-width="0.9"/><path d="M13.8 21.3 V22.8 M16.5 21.3 V22.8 M19.3 21.3 V22.8" stroke="#080808" stroke-width="0.9"/><rect x="9.8" y="25.2" width="13.6" height="3.6" rx="1.2" fill="#080808"/><rect x="11.2" y="26.6" width="10.9" height="1.1" fill="#b4b4b4"/></svg></div>
<div class="cell" style="left:14px;top:365px"><svg viewBox="0 0 32 32"><path d="M7.5 7.6 L10 5.3 H11.9 V20 H7.5 Z" fill="#f6f6f6" stroke="#141414" stroke-width="1.2" stroke-linejoin="round"/><path d="M9 8.2 V19.6" stroke="#3a3a3a" stroke-width="0.7"/><rect x="7.5" y="22.6" width="4.4" height="4.7" fill="#505050" stroke="#1c1c1c" stroke-width="0.9"/><path d="M8 24 H11.4 M8 25.6 H11.4" stroke="#9a9a9a" stroke-width="0.6"/><rect x="4.6" y="19.9" width="9.4" height="2.9" rx="1.4" fill="#f0f0f0" stroke="#141414" stroke-width="1.2"/><circle cx="22" cy="17.3" r="5.9" fill="#f4f4f4" stroke="#141414" stroke-width="1.4"/><circle cx="22" cy="17.3" r="4.2" fill="none" stroke="#3a3a3a" stroke-width="0.7" stroke-dasharray="2.3 1.0" stroke-dashoffset="1.1"/><rect x="19.7" y="15.1" width="4.6" height="4.5" rx="0.9" fill="#858585" stroke="#4a4a4a" stroke-width="0.9"/></svg></div>
<div class="cell" style="left:46px;top:365px"><svg viewBox="0 0 32 32"><path d="M8 5.6 Q8 5 8.8 5 H11.6 V15.2 L8 13 Z" fill="#080808"/><path d="M9.4 7 H10.8 V13.2 L9.4 12.3 Z" fill="#909090"/><path d="M11.1 3.2 H19.8 V5.2 H21.8 V25.6 H10.9 V9.6 H11.1 Z" fill="#080808"/><rect x="12.6" y="4.4" width="1.5" height="4.5" fill="#8c8c8c"/><rect x="15.2" y="4.4" width="0.8" height="4.5" fill="#8c8c8c"/><rect x="17.1" y="4.4" width="1.5" height="4.5" fill="#8c8c8c"/><rect x="19.5" y="6.4" width="1.2" height="2.5" fill="#8c8c8c"/><rect x="12.1" y="10.4" width="8.8" height="4.5" fill="#fff"/><path d="M13 12.3 H14.6 M15.7 12.3 H17.3 M18.4 12.3 H20" stroke="#080808" stroke-width="0.9"/><rect x="12.1" y="16.9" width="8.8" height="1.8" fill="#fff"/><rect x="12.1" y="20.5" width="8.8" height="4.3" fill="#fff"/><path d="M12.6 21.3 H15 M15.7 21.3 H17.4 M18.2 21.3 H20.4" stroke="#080808" stroke-width="0.9"/><path d="M13.8 21.3 V22.8 M16.5 21.3 V22.8 M19.3 21.3 V22.8" stroke="#080808" stroke-width="0.9"/><rect x="9.8" y="25.2" width="13.6" height="3.6" rx="1.2" fill="#080808"/><rect x="11.2" y="26.6" width="10.9" height="1.1" fill="#b4b4b4"/></svg></div>
<div class="cell" style="left:78px;top:365px"><svg viewBox="0 0 32 32"><path d="M5.3 4.3 H26.6 V14.2 H28.7 V27 H19.5 V28.2 H12.2 V27 H3.2 V14.2 H5.3 Z" fill="#111"/><rect x="6.4" y="5.9" width="19.1" height="2.9" fill="#f2f2f2"/><path d="M8 7.35 H24" stroke="#111" stroke-width="0.9" stroke-dasharray="1.6 0.7"/><rect x="6.6" y="10.1" width="3.2" height="3.7" fill="#fff"/><rect x="11.4" y="10.1" width="3.2" height="3.7" fill="#fff"/><rect x="16.2" y="10.1" width="3.2" height="3.7" fill="#fff"/><rect x="21" y="10.1" width="3.5" height="3.7" fill="#fff"/><circle cx="8.2" cy="12.2" r="0.6" fill="#111"/><circle cx="13" cy="12.2" r="0.6" fill="#111"/><circle cx="17.8" cy="12.2" r="0.6" fill="#111"/><circle cx="22.7" cy="12.2" r="0.6" fill="#111"/><path d="M5.2 16.1 H26.8" stroke="#8a8a8a" stroke-width="1.7" stroke-dasharray="1.5 0.9"/><path d="M4.2 18.6 H9.2 V22.6 Q8.6 25.6 4.2 25.6 Z" fill="#bdbdbd"/><path d="M4.2 24 Q8 24.6 8.8 20" fill="none" stroke="#fff" stroke-width="1.2"/><path d="M27.8 18.6 H22.8 V22.6 Q23.4 25.6 27.8 25.6 Z" fill="#bdbdbd"/><path d="M27.8 24 Q24 24.6 23.2 20" fill="none" stroke="#fff" stroke-width="1.2"/><rect x="14.4" y="18.6" width="3.2" height="8.6" fill="#f4f4f4"/><circle cx="16" cy="21.2" r="0.8" fill="#111"/><circle cx="16" cy="24.8" r="0.8" fill="#111"/><path d="M11.2 18.6 V26.4 M20.8 18.6 V26.4" stroke="#ddd" stroke-width="0.9"/></svg></div>
<div class="cell" style="left:110px;top:365px"></div>
<div class="cell" style="left:142px;top:365px"></div>
<div class="cell" style="left:174px;top:365px"></div>
<div class="cell" style="left:206px;top:365px"></div>
<div class="cell" style="left:238px;top:365px"></div>
<div class="cell" style="left:270px;top:365px"></div>
<div class="cell" style="left:302px;top:365px"></div>
<div class="cell" style="left:14px;top:397px"></div>
<div class="cell" style="left:46px;top:397px"></div>
<div class="cell" style="left:78px;top:397px"></div>
<div class="cell" style="left:110px;top:397px"></div>
<div class="cell" style="left:142px;top:397px"></div>
<div class="cell" style="left:174px;top:397px"></div>
<div class="cell" style="left:206px;top:397px"></div>
<div class="cell" style="left:238px;top:397px"></div>
<div class="cell" style="left:270px;top:397px"></div>
<div class="cell" style="left:302px;top:397px"></div>
<div class="cell" style="left:14px;top:429px"></div>
<div class="cell" style="left:46px;top:429px"></div>
<div class="cell" style="left:78px;top:429px"></div>
<div class="cell" style="left:110px;top:429px"></div>
<div class="cell" style="left:142px;top:429px"></div>
<div class="cell" style="left:174px;top:429px"></div>
<div class="cell" style="left:206px;top:429px"></div>
<div class="cell" style="left:238px;top:429px"></div>
<div class="cell" style="left:270px;top:429px"></div>
<div class="cell" style="left:302px;top:429px"></div>
<div class="cell" style="left:14px;top:461px"><svg viewBox="0 0 32 32"><path d="M8 5.6 Q8 5 8.8 5 H11.6 V15.2 L8 13 Z" fill="#080808"/><path d="M9.4 7 H10.8 V13.2 L9.4 12.3 Z" fill="#909090"/><path d="M11.1 3.2 H19.8 V5.2 H21.8 V25.6 H10.9 V9.6 H11.1 Z" fill="#080808"/><rect x="12.6" y="4.4" width="1.5" height="4.5" fill="#8c8c8c"/><rect x="15.2" y="4.4" width="0.8" height="4.5" fill="#8c8c8c"/><rect x="17.1" y="4.4" width="1.5" height="4.5" fill="#8c8c8c"/><rect x="19.5" y="6.4" width="1.2" height="2.5" fill="#8c8c8c"/><rect x="12.1" y="10.4" width="8.8" height="4.5" fill="#fff"/><path d="M13 12.3 H14.6 M15.7 12.3 H17.3 M18.4 12.3 H20" stroke="#080808" stroke-width="0.9"/><rect x="12.1" y="16.9" width="8.8" height="1.8" fill="#fff"/><rect x="12.1" y="20.5" width="8.8" height="4.3" fill="#fff"/><path d="M12.6 21.3 H15 M15.7 21.3 H17.4 M18.2 21.3 H20.4" stroke="#080808" stroke-width="0.9"/><path d="M13.8 21.3 V22.8 M16.5 21.3 V22.8 M19.3 21.3 V22.8" stroke="#080808" stroke-width="0.9"/><rect x="9.8" y="25.2" width="13.6" height="3.6" rx="1.2" fill="#080808"/><rect x="11.2" y="26.6" width="10.9" height="1.1" fill="#b4b4b4"/></svg></div>
<div class="cell" style="left:46px;top:461px"><svg viewBox="0 0 32 32"><path d="M8 5.6 Q8 5 8.8 5 H11.6 V15.2 L8 13 Z" fill="#080808"/><path d="M9.4 7 H10.8 V13.2 L9.4 12.3 Z" fill="#909090"/><path d="M11.1 3.2 H19.8 V5.2 H21.8 V25.6 H10.9 V9.6 H11.1 Z" fill="#080808"/><rect x="12.6" y="4.4" width="1.5" height="4.5" fill="#8c8c8c"/><rect x="15.2" y="4.4" width="0.8" height="4.5" fill="#8c8c8c"/><rect x="17.1" y="4.4" width="1.5" height="4.5" fill="#8c8c8c"/><rect x="19.5" y="6.4" width="1.2" height="2.5" fill="#8c8c8c"/><rect x="12.1" y="10.4" width="8.8" height="4.5" fill="#fff"/><path d="M13 12.3 H14.6 M15.7 12.3 H17.3 M18.4 12.3 H20" stroke="#080808" stroke-width="0.9"/><rect x="12.1" y="16.9" width="8.8" height="1.8" fill="#fff"/><rect x="12.1" y="20.5" width="8.8" height="4.3" fill="#fff"/><path d="M12.6 21.3 H15 M15.7 21.3 H17.4 M18.2 21.3 H20.4" stroke="#080808" stroke-width="0.9"/><path d="M13.8 21.3 V22.8 M16.5 21.3 V22.8 M19.3 21.3 V22.8" stroke="#080808" stroke-width="0.9"/><rect x="9.8" y="25.2" width="13.6" height="3.6" rx="1.2" fill="#080808"/><rect x="11.2" y="26.6" width="10.9" height="1.1" fill="#b4b4b4"/></svg></div>
<div class="cell" style="left:78px;top:461px"><svg viewBox="0 0 32 32"><path d="M8 5.6 Q8 5 8.8 5 H11.6 V15.2 L8 13 Z" fill="#080808"/><path d="M9.4 7 H10.8 V13.2 L9.4 12.3 Z" fill="#909090"/><path d="M11.1 3.2 H19.8 V5.2 H21.8 V25.6 H10.9 V9.6 H11.1 Z" fill="#080808"/><rect x="12.6" y="4.4" width="1.5" height="4.5" fill="#8c8c8c"/><rect x="15.2" y="4.4" width="0.8" height="4.5" fill="#8c8c8c"/><rect x="17.1" y="4.4" width="1.5" height="4.5" fill="#8c8c8c"/><rect x="19.5" y="6.4" width="1.2" height="2.5" fill="#8c8c8c"/><rect x="12.1" y="10.4" width="8.8" height="4.5" fill="#fff"/><path d="M13 12.3 H14.6 M15.7 12.3 H17.3 M18.4 12.3 H20" stroke="#080808" stroke-width="0.9"/><rect x="12.1" y="16.9" width="8.8" height="1.8" fill="#fff"/><rect x="12.1" y="20.5" width="8.8" height="4.3" fill="#fff"/><path d="M12.6 21.3 H15 M15.7 21.3 H17.4 M18.2 21.3 H20.4" stroke="#080808" stroke-width="0.9"/><path d="M13.8 21.3 V22.8 M16.5 21.3 V22.8 M19.3 21.3 V22.8" stroke="#080808" stroke-width="0.9"/><rect x="9.8" y="25.2" width="13.6" height="3.6" rx="1.2" fill="#080808"/><rect x="11.2" y="26.6" width="10.9" height="1.1" fill="#b4b4b4"/></svg></div>
<div class="cell" style="left:110px;top:461px"></div>
<div class="cell" style="left:142px;top:461px"></div>
<div class="cell" style="left:174px;top:461px"></div>
<div class="cell" style="left:206px;top:461px"></div>
<div class="cell" style="left:238px;top:461px"></div>
<div class="cell" style="left:270px;top:461px"></div>
<div class="cell" style="left:302px;top:461px"></div>
<span class="t" style="left:339.10px;top:137.50px;font-size:12px;line-height:14px;color:#000;letter-spacing:-0.504px;">Type</span>
<span class="t" style="left:339.10px;top:163.50px;font-size:12px;line-height:14px;color:#000;letter-spacing:-0.258px;">Id</span>
<span class="t" style="left:339.10px;top:189.50px;font-size:12px;line-height:14px;color:#000;letter-spacing:-0.331px;">Slot 1</span>
<span class="t" style="left:339.10px;top:215.50px;font-size:12px;line-height:14px;color:#000;letter-spacing:-0.198px;">Slot 2</span>
<span class="t" style="left:339.10px;top:241.50px;font-size:12px;line-height:14px;color:#000;letter-spacing:-0.198px;">Slot 3</span>
<span class="t" style="left:339.10px;top:267.50px;font-size:12px;line-height:14px;color:#000;letter-spacing:-0.280px;">Element Type</span>
<span class="t" style="left:339.10px;top:293.50px;font-size:12px;line-height:14px;color:#000;letter-spacing:-0.289px;">Element Value</span>
<span class="t" style="left:339.10px;top:319.50px;font-size:12px;line-height:14px;color:#000;letter-spacing:-0.464px;">Sharpness</span>
<span class="t" style="left:339.10px;top:345.50px;font-size:12px;line-height:14px;color:#000;letter-spacing:0.164px;">Modifier</span>
<span class="t" style="left:339.10px;top:371.50px;font-size:12px;line-height:14px;color:#000;letter-spacing:-0.228px;">Upgrade Level</span>
<span class="t" style="left:339.10px;top:397.50px;font-size:12px;line-height:14px;color:#000;letter-spacing:-0.498px;">Phials</span>
<span class="t" style="left:339.10px;top:422.50px;font-size:12px;line-height:14px;color:#000;letter-spacing:0.033px;">Slot count</span>
<span class="t" style="left:339.10px;top:448.50px;font-size:12px;line-height:14px;color:#000;letter-spacing:-0.316px;">Polished</span>
<span class="t" style="left:339.10px;top:474.50px;font-size:12px;line-height:14px;color:#000;letter-spacing:-0.386px;">Glow</span>
<span class="t" style="left:339.10px;top:500.50px;font-size:12px;line-height:14px;color:#000;letter-spacing:-0.022px;">Honing</span>
<span class="t" style="left:339.10px;top:526.50px;font-size:12px;line-height:14px;color:#000;letter-spacing:-0.307px;">Rarity</span>
<span class="t" style="left:339.10px;top:552.50px;font-size:12px;line-height:14px;color:#000;letter-spacing:-0.248px;">Polish Requirements</span>
<div class="cb" style="left:451px;top:131px;width:223px;height:26px"></div>
<svg class="abs" style="left:661px;top:140px" width="9" height="7" viewBox="0 0 9 7"><path d="M1 1.5 L4 4.5 L7 1.5" fill="none" stroke="#505050" stroke-width="1.3"/></svg>
<span class="t" style="left:457.20px;top:136.00px;font-size:12px;line-height:14px;color:#000;letter-spacing:-0.299px;">Charge Blade</span>
<div class="cb" style="left:451px;top:157px;width:223px;height:26px"></div>
<svg class="abs" style="left:661px;top:166px" width="9" height="7" viewBox="0 0 9 7"><path d="M1 1.5 L4 4.5 L7 1.5" fill="none" stroke="#505050" stroke-width="1.3"/></svg>
<span class="t" style="left:457.20px;top:162.00px;font-size:12px;line-height:14px;color:#000;letter-spacing:-0.223px;">Deceadeus (purple)</span>
<div class="cb" style="left:451px;top:183px;width:223px;height:26px"></div>
<svg class="abs" style="left:661px;top:192px" width="9" height="7" viewBox="0 0 9 7"><path d="M1 1.5 L4 4.5 L7 1.5" fill="none" stroke="#505050" stroke-width="1.3"/></svg>
<span class="t" style="left:457.20px;top:188.00px;font-size:12px;line-height:14px;color:#000;letter-spacing:-0.270px;">Attack Jewel 1</span>
<div class="cb" style="left:451px;top:209px;width:223px;height:26px"></div>
<svg class="abs" style="left:661px;top:218px" width="9" height="7" viewBox="0 0 9 7"><path d="M1 1.5 L4 4.5 L7 1.5" fill="none" stroke="#505050" stroke-width="1.3"/></svg>
<span class="t" style="left:457.20px;top:214.00px;font-size:12px;line-height:14px;color:#000;letter-spacing:-0.270px;">Attack Jewel 1</span>
<div class="cb" style="left:451px;top:235px;width:223px;height:26px"></div>
<svg class="abs" style="left:661px;top:244px" width="9" height="7" viewBox="0 0 9 7"><path d="M1 1.5 L4 4.5 L7 1.5" fill="none" stroke="#505050" stroke-width="1.3"/></svg>
<span class="t" style="left:457.20px;top:240.00px;font-size:12px;line-height:14px;color:#000;letter-spacing:-0.270px;">Attack Jewel 1</span>
<div class="cb" style="left:451px;top:261px;width:223px;height:26px"></div>
<svg class="abs" style="left:661px;top:270px" width="9" height="7" viewBox="0 0 9 7"><path d="M1 1.5 L4 4.5 L7 1.5" fill="none" stroke="#505050" stroke-width="1.3"/></svg>
<span class="t" style="left:457.20px;top:266.00px;font-size:12px;line-height:14px;color:#000;letter-spacing:-0.498px;">Blast</span>
<div class="cb" style="left:451px;top:287px;width:223px;height:26px"></div>
<svg class="abs" style="left:661px;top:296px" width="9" height="7" viewBox="0 0 9 7"><path d="M1 1.5 L4 4.5 L7 1.5" fill="none" stroke="#505050" stroke-width="1.3"/></svg>
<span class="t" style="left:457.20px;top:292.00px;font-size:12px;line-height:14px;color:#000;letter-spacing:-0.368px;">(25720)</span>
<div class="cb" style="left:451px;top:313px;width:223px;height:26px"></div>
<svg class="abs" style="left:661px;top:322px" width="9" height="7" viewBox="0 0 9 7"><path d="M1 1.5 L4 4.5 L7 1.5" fill="none" stroke="#505050" stroke-width="1.3"/></svg>
<span class="t" style="left:457.20px;top:318.00px;font-size:12px;line-height:14px;color:#000;letter-spacing:-0.561px;">0xDA</span>
<div class="cb" style="left:451px;top:339px;width:223px;height:26px"></div>
<svg class="abs" style="left:661px;top:348px" width="9" height="7" viewBox="0 0 9 7"><path d="M1 1.5 L4 4.5 L7 1.5" fill="none" stroke="#505050" stroke-width="1.3"/></svg>
<span class="t" style="left:457.00px;top:341.00px;font-size:12px;line-height:14px;color:#000;letter-spacing:-0.052px;font-family:'Liberation Mono',monospace;">340 | -25% |</span>
<div class="cb" style="left:451px;top:365px;width:223px;height:26px"></div>
<svg class="abs" style="left:661px;top:374px" width="9" height="7" viewBox="0 0 9 7"><path d="M1 1.5 L4 4.5 L7 1.5" fill="none" stroke="#505050" stroke-width="1.3"/></svg>
<span class="t" style="left:457.20px;top:370.00px;font-size:12px;line-height:14px;color:#000;">3</span>
<div class="cb" style="left:451px;top:391px;width:223px;height:26px"></div>
<svg class="abs" style="left:661px;top:400px" width="9" height="7" viewBox="0 0 9 7"><path d="M1 1.5 L4 4.5 L7 1.5" fill="none" stroke="#505050" stroke-width="1.3"/></svg>
<span class="t" style="left:457.00px;top:393.00px;font-size:12px;line-height:14px;color:#000;letter-spacing:-0.053px;font-family:'Liberation Mono',monospace;">Impact</span>
<div class="cb" style="left:451px;top:417px;width:223px;height:25px"></div>
<svg class="abs" style="left:661px;top:426px" width="9" height="7" viewBox="0 0 9 7"><path d="M1 1.5 L4 4.5 L7 1.5" fill="none" stroke="#505050" stroke-width="1.3"/></svg>
<span class="t" style="left:457.20px;top:421.00px;font-size:12px;line-height:14px;color:#000;">3</span>
<div class="cb" style="left:451px;top:494px;width:223px;height:26px"></div>
<svg class="abs" style="left:661px;top:503px" width="9" height="7" viewBox="0 0 9 7"><path d="M1 1.5 L4 4.5 L7 1.5" fill="none" stroke="#505050" stroke-width="1.3"/></svg>
<span class="t" style="left:457.20px;top:499.00px;font-size:12px;line-height:14px;color:#000;letter-spacing:-0.090px;">Life</span>
<div class="cb" style="left:451px;top:520px;width:223px;height:26px"></div>
<svg class="abs" style="left:661px;top:529px" width="9" height="7" viewBox="0 0 9 7"><path d="M1 1.5 L4 4.5 L7 1.5" fill="none" stroke="#505050" stroke-width="1.3"/></svg>
<span class="t" style="left:457.20px;top:525.00px;font-size:12px;line-height:14px;color:#000;letter-spacing:-0.680px;">10</span>
<div class="cb" style="left:451px;top:546px;width:223px;height:26px"></div>
<svg class="abs" style="left:661px;top:555px" width="9" height="7" viewBox="0 0 9 7"><path d="M1 1.5 L4 4.5 L7 1.5" fill="none" stroke="#505050" stroke-width="1.3"/></svg>
<span class="t" style="left:457.20px;top:551.00px;font-size:12px;line-height:14px;color:#000;">4</span>
<div class="chk" style="left:452px;top:443px;width:14px;height:14px"></div>
<svg class="abs" style="left:452px;top:443px" width="14" height="14" viewBox="0 0 14 14"><path d="M2.6 7.2 L6.1 10.9 L11.2 2.6" fill="none" stroke="#1a1a1a" stroke-width="1.9"/></svg>
<div class="chk" style="left:452px;top:469px;width:14px;height:14px"></div>
<svg class="abs" style="left:452px;top:469px" width="14" height="14" viewBox="0 0 14 14"><path d="M2.6 7.2 L6.1 10.9 L11.2 2.6" fill="none" stroke="#1a1a1a" stroke-width="1.9"/></svg>
<div class="chk" style="left:675px;top:184px;width:14px;height:13px"></div>
<span class="t" style="left:694.80px;top:184.00px;font-size:12px;line-height:14px;color:#000;letter-spacing:-0.589px;">Fixed</span>
<div class="chk" style="left:675px;top:210px;width:14px;height:13px"></div>
<span class="t" style="left:694.80px;top:210.00px;font-size:12px;line-height:14px;color:#000;letter-spacing:-0.589px;">Fixed</span>
<div class="chk" style="left:675px;top:236px;width:14px;height:13px"></div>
<span class="t" style="left:694.80px;top:236.00px;font-size:12px;line-height:14px;color:#000;letter-spacing:-0.589px;">Fixed</span>
</body></html>
